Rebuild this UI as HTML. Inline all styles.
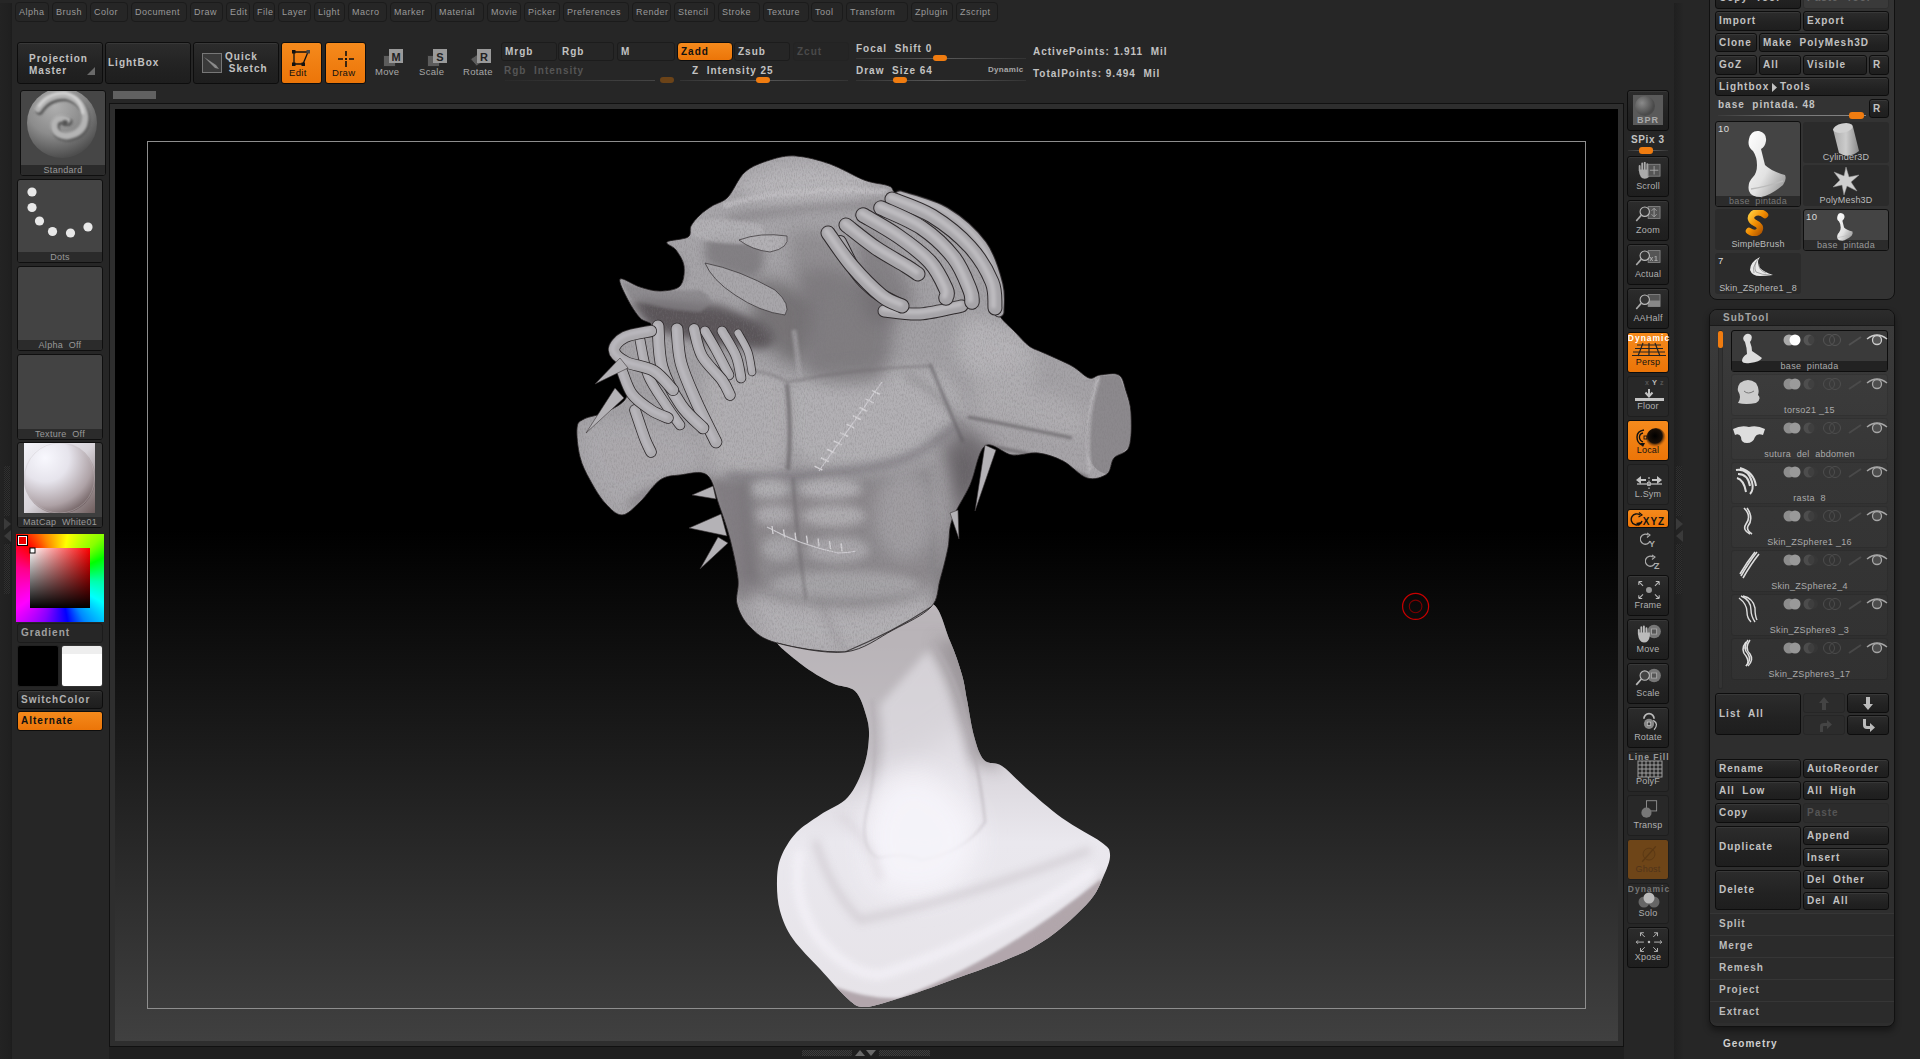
<!DOCTYPE html><html><head><meta charset="utf-8"><style>
*{margin:0;padding:0;box-sizing:border-box}
html,body{width:1920px;height:1059px;overflow:hidden;background:#262626;font-family:"Liberation Sans",sans-serif;}
div,span,svg{position:absolute}
.mb{border:1px solid #1b1b1b;border-radius:4px;color:#9a9a9a;font-size:9px;line-height:19px;padding-left:3px;white-space:nowrap;letter-spacing:0.5px}
.b{border:1px solid #0d0d0d;border-radius:3px;background:linear-gradient(#2c2c2c,#222 60%,#1e1e1e);color:#c2c2c2;font-weight:bold;font-size:10px;letter-spacing:1px;white-space:nowrap;padding-left:3px;box-shadow:inset 0 1px 0 #383838}
.bd{border:1px solid #272727;border-radius:3px;background:#2a2a2a;color:#555;font-weight:bold;font-size:10px;letter-spacing:1px;white-space:nowrap;padding-left:3px}
.o{background:linear-gradient(#f58a1c,#ec7508);border:1px solid #0d0d0d;border-radius:3px;color:#111;font-weight:bold;font-size:10px;letter-spacing:1px;white-space:nowrap;padding-left:3px}
.t{color:#c2c2c2;font-weight:bold;font-size:10px;letter-spacing:1px;white-space:nowrap}
.tr{color:#b4b4b4;font-size:9px;letter-spacing:0.3px;white-space:nowrap}
.tile{border:1px solid #0f0f0f;border-radius:3px;background:#464646;overflow:hidden}
.lab{left:0;right:0;bottom:0;height:10px;background:#2a2a2a;color:#999;font-size:9px;line-height:10px;text-align:center;letter-spacing:0.3px;white-space:nowrap}
</style></head><body>
<div class="" style="left:0px;top:3px;width:12px;height:1056px;background:linear-gradient(90deg,#232323,#202020 80%,#1c1c1c)"></div>
<div class="mb" style="left:15px;top:2px;width:34px;height:20px;">Alpha</div>
<div class="mb" style="left:52px;top:2px;width:35px;height:20px;">Brush</div>
<div class="mb" style="left:90px;top:2px;width:38px;height:20px;">Color</div>
<div class="mb" style="left:131px;top:2px;width:56px;height:20px;">Document</div>
<div class="mb" style="left:190px;top:2px;width:33px;height:20px;">Draw</div>
<div class="mb" style="left:226px;top:2px;width:24px;height:20px;">Edit</div>
<div class="mb" style="left:253px;top:2px;width:22px;height:20px;">File</div>
<div class="mb" style="left:278px;top:2px;width:33px;height:20px;">Layer</div>
<div class="mb" style="left:314px;top:2px;width:31px;height:20px;">Light</div>
<div class="mb" style="left:348px;top:2px;width:39px;height:20px;">Macro</div>
<div class="mb" style="left:390px;top:2px;width:42px;height:20px;">Marker</div>
<div class="mb" style="left:435px;top:2px;width:49px;height:20px;">Material</div>
<div class="mb" style="left:487px;top:2px;width:34px;height:20px;">Movie</div>
<div class="mb" style="left:524px;top:2px;width:36px;height:20px;">Picker</div>
<div class="mb" style="left:563px;top:2px;width:66px;height:20px;">Preferences</div>
<div class="mb" style="left:632px;top:2px;width:39px;height:20px;">Render</div>
<div class="mb" style="left:674px;top:2px;width:41px;height:20px;">Stencil</div>
<div class="mb" style="left:718px;top:2px;width:42px;height:20px;">Stroke</div>
<div class="mb" style="left:763px;top:2px;width:46px;height:20px;">Texture</div>
<div class="mb" style="left:811px;top:2px;width:32px;height:20px;">Tool</div>
<div class="mb" style="left:846px;top:2px;width:62px;height:20px;">Transform</div>
<div class="mb" style="left:911px;top:2px;width:42px;height:20px;">Zplugin</div>
<div class="mb" style="left:956px;top:2px;width:42px;height:20px;">Zscript</div>
<div class="" style="left:109px;top:103px;width:1515px;height:944px;background:#2e2e2e;border:1px solid #111"></div>
<div class="" style="left:115px;top:109px;width:1503px;height:932px;background:linear-gradient(#000 0px,#000 420px,#404040 932px)"></div>
<div class="" style="left:147px;top:141px;width:1439px;height:868px;border:1px solid #8e8e8e"></div>
<div class="" style="left:113px;top:91px;width:43px;height:8px;background:#616161"></div>
<svg style="left:0;top:0" width="1920" height="1059" viewBox="0 0 1920 1059">
<defs>
<clipPath id="cv"><rect x="115" y="109" width="1503" height="932"/></clipPath>
<clipPath id="bodyclip"><path d="M728.0 197.0 C733.5 191.3 738.0 178.2 745.0 172.0 C752.0 165.8 761.5 162.7 770.0 160.0 C778.5 157.3 786.0 155.3 796.0 156.0 C806.0 156.7 818.7 160.0 830.0 164.0 C841.3 168.0 854.2 176.3 864.0 180.0 C873.8 183.7 883.5 183.7 889.0 186.0 C894.5 188.3 891.0 190.8 897.0 194.0 C903.0 197.2 915.7 200.3 925.0 205.0 C934.3 209.7 944.7 216.2 953.0 222.0 C961.3 227.8 968.8 234.0 975.0 240.0 C981.2 246.0 985.3 250.2 990.0 258.0 C994.7 265.8 1000.8 279.2 1003.0 287.0 C1005.2 294.8 1003.5 300.2 1003.0 305.0 C1002.5 309.8 998.0 311.5 1000.0 316.0 C1002.0 320.5 1010.2 327.0 1015.0 332.0 C1019.8 337.0 1024.2 342.5 1029.0 346.0 C1033.8 349.5 1036.8 349.7 1044.0 353.0 C1051.2 356.3 1064.5 361.8 1072.0 366.0 C1079.5 370.2 1084.3 376.5 1089.0 378.0 C1093.7 379.5 1095.0 375.5 1100.0 375.0 C1105.0 374.5 1114.7 372.3 1119.0 375.0 C1123.3 377.7 1124.0 384.7 1126.0 391.0 C1128.0 397.3 1130.5 403.7 1131.0 413.0 C1131.5 422.3 1131.8 439.5 1129.0 447.0 C1126.2 454.5 1117.7 453.5 1114.0 458.0 C1110.3 462.5 1111.5 470.7 1107.0 474.0 C1102.5 477.3 1094.3 480.2 1087.0 478.0 C1079.7 475.8 1071.2 465.2 1063.0 461.0 C1054.8 456.8 1046.5 454.0 1038.0 453.0 C1029.5 452.0 1020.8 456.2 1012.0 455.0 C1003.2 453.8 992.0 441.0 985.0 446.0 C978.0 451.0 975.5 472.7 970.0 485.0 C964.5 497.3 955.7 509.5 952.0 520.0 C948.3 530.5 950.0 538.0 948.0 548.0 C946.0 558.0 942.8 570.2 940.0 580.0 C937.2 589.8 938.8 598.7 931.0 607.0 C923.2 615.3 907.3 622.5 893.0 630.0 C878.7 637.5 864.3 649.8 845.0 652.0 C825.7 654.2 792.8 647.2 777.0 643.0 C761.2 638.8 756.7 633.5 750.0 627.0 C743.3 620.5 739.0 612.0 737.0 604.0 C735.0 596.0 739.2 589.8 738.0 579.0 C736.8 568.2 733.2 551.3 730.0 539.0 C726.8 526.7 722.8 515.7 719.0 505.0 C715.2 494.3 713.5 480.0 707.0 475.0 C700.5 470.0 687.8 474.2 680.0 475.0 C672.2 475.8 666.7 475.5 660.0 480.0 C653.3 484.5 646.3 496.2 640.0 502.0 C633.7 507.8 627.8 514.8 622.0 515.0 C616.2 515.2 610.3 508.8 605.0 503.0 C599.7 497.2 594.2 487.7 590.0 480.0 C585.8 472.3 582.2 465.7 580.0 457.0 C577.8 448.3 576.3 434.3 577.0 428.0 C577.7 421.7 579.2 421.7 584.0 419.0 C588.8 416.3 599.0 415.5 606.0 412.0 C613.0 408.5 623.0 404.0 626.0 398.0 C629.0 392.0 625.8 383.7 624.0 376.0 C622.2 368.3 614.0 358.8 615.0 352.0 C616.0 345.2 624.0 339.5 630.0 335.0 C636.0 330.5 649.3 327.8 651.0 325.0 C652.7 322.2 643.8 322.2 640.0 318.0 C636.2 313.8 631.3 306.5 628.0 300.0 C624.7 293.5 618.0 281.2 620.0 279.0 C622.0 276.8 633.3 285.0 640.0 287.0 C646.7 289.0 653.3 291.2 660.0 291.0 C666.7 290.8 676.0 290.2 680.0 286.0 C684.0 281.8 684.7 272.0 684.0 266.0 C683.3 260.0 678.8 254.0 676.0 250.0 C673.2 246.0 665.0 244.2 667.0 242.0 C669.0 239.8 684.0 239.7 688.0 237.0 C692.0 234.3 689.0 229.7 691.0 226.0 C693.0 222.3 696.5 218.3 700.0 215.0 C703.5 211.7 707.3 209.0 712.0 206.0 C716.7 203.0 722.5 202.7 728.0 197.0Z"/></clipPath>
<clipPath id="baseclip"><path d="M777.0 638.0 C769.7 640.7 791.8 656.5 801.0 664.0 C810.2 671.5 823.0 678.5 832.0 683.0 C841.0 687.5 849.3 685.7 855.0 691.0 C860.7 696.3 863.7 707.5 866.0 715.0 C868.3 722.5 869.3 727.5 869.0 736.0 C868.7 744.5 867.5 755.8 864.0 766.0 C860.5 776.2 855.3 788.8 848.0 797.0 C840.7 805.2 828.7 809.0 820.0 815.0 C811.3 821.0 802.5 826.0 796.0 833.0 C789.5 840.0 784.2 849.0 781.0 857.0 C777.8 865.0 777.2 872.0 777.0 881.0 C776.8 890.0 777.3 901.3 780.0 911.0 C782.7 920.7 786.3 929.3 793.0 939.0 C799.7 948.7 810.8 959.0 820.0 969.0 C829.2 979.0 840.8 992.7 848.0 999.0 C855.2 1005.3 856.5 1006.5 863.0 1007.0 C869.5 1007.5 874.0 1005.8 887.0 1002.0 C900.0 998.2 916.8 993.0 941.0 984.0 C965.2 975.0 1007.8 961.2 1032.0 948.0 C1056.2 934.8 1074.0 917.2 1086.0 905.0 C1098.0 892.8 1100.0 883.5 1104.0 875.0 C1108.0 866.5 1110.5 859.5 1110.0 854.0 C1109.5 848.5 1109.0 848.0 1101.0 842.0 C1093.0 836.0 1074.5 827.0 1062.0 818.0 C1049.5 809.0 1036.0 796.7 1026.0 788.0 C1016.0 779.3 1009.0 770.7 1002.0 766.0 C995.0 761.3 988.7 765.0 984.0 760.0 C979.3 755.0 976.8 746.0 974.0 736.0 C971.2 726.0 969.0 710.2 967.0 700.0 C965.0 689.8 964.8 684.8 962.0 675.0 C959.2 665.2 955.2 653.0 950.0 641.0 C944.8 629.0 940.5 605.7 931.0 603.0 C921.5 600.3 907.3 617.5 893.0 625.0 C878.7 632.5 864.3 645.8 845.0 648.0 C825.7 650.2 784.3 635.3 777.0 638.0Z"/></clipPath>
<filter id="b4" filterUnits="userSpaceOnUse" x="100" y="100" width="1520" height="940"><feGaussianBlur stdDeviation="4"/></filter>
<filter id="b8" filterUnits="userSpaceOnUse" x="100" y="100" width="1520" height="940"><feGaussianBlur stdDeviation="8"/></filter>
<filter id="b14" filterUnits="userSpaceOnUse" x="100" y="100" width="1520" height="940"><feGaussianBlur stdDeviation="14"/></filter>
<filter id="tex" filterUnits="userSpaceOnUse" x="560" y="140" width="600" height="560"><feTurbulence type="fractalNoise" baseFrequency="0.9 0.35" numOctaves="2" seed="3" result="n"/><feColorMatrix in="n" type="matrix" values="0 0 0 0 0.2  0 0 0 0 0.19  0 0 0 0 0.2  0 0 0 -2.2 1.25" result="d"/><feComposite in="d" in2="SourceGraphic" operator="in"/></filter>
<filter id="b2" filterUnits="userSpaceOnUse" x="100" y="100" width="1520" height="940"><feGaussianBlur stdDeviation="1.5"/></filter>
<linearGradient id="bodyg" x1="0" y1="0" x2="0.3" y2="1"><stop offset="0" stop-color="#aaa8ac"/><stop offset="0.5" stop-color="#a2a0a4"/><stop offset="1" stop-color="#aaa7ab"/></linearGradient>
<linearGradient id="baseg" gradientUnits="userSpaceOnUse" x1="0" y1="640" x2="0" y2="1008"><stop offset="0" stop-color="#c6c0c4"/><stop offset="0.3" stop-color="#d6d2d8"/><stop offset="0.55" stop-color="#eae8ee"/><stop offset="1" stop-color="#e6e3e8"/></linearGradient>
</defs>
<g clip-path="url(#cv)">
<path d="M777.0 638.0 C769.7 640.7 791.8 656.5 801.0 664.0 C810.2 671.5 823.0 678.5 832.0 683.0 C841.0 687.5 849.3 685.7 855.0 691.0 C860.7 696.3 863.7 707.5 866.0 715.0 C868.3 722.5 869.3 727.5 869.0 736.0 C868.7 744.5 867.5 755.8 864.0 766.0 C860.5 776.2 855.3 788.8 848.0 797.0 C840.7 805.2 828.7 809.0 820.0 815.0 C811.3 821.0 802.5 826.0 796.0 833.0 C789.5 840.0 784.2 849.0 781.0 857.0 C777.8 865.0 777.2 872.0 777.0 881.0 C776.8 890.0 777.3 901.3 780.0 911.0 C782.7 920.7 786.3 929.3 793.0 939.0 C799.7 948.7 810.8 959.0 820.0 969.0 C829.2 979.0 840.8 992.7 848.0 999.0 C855.2 1005.3 856.5 1006.5 863.0 1007.0 C869.5 1007.5 874.0 1005.8 887.0 1002.0 C900.0 998.2 916.8 993.0 941.0 984.0 C965.2 975.0 1007.8 961.2 1032.0 948.0 C1056.2 934.8 1074.0 917.2 1086.0 905.0 C1098.0 892.8 1100.0 883.5 1104.0 875.0 C1108.0 866.5 1110.5 859.5 1110.0 854.0 C1109.5 848.5 1109.0 848.0 1101.0 842.0 C1093.0 836.0 1074.5 827.0 1062.0 818.0 C1049.5 809.0 1036.0 796.7 1026.0 788.0 C1016.0 779.3 1009.0 770.7 1002.0 766.0 C995.0 761.3 988.7 765.0 984.0 760.0 C979.3 755.0 976.8 746.0 974.0 736.0 C971.2 726.0 969.0 710.2 967.0 700.0 C965.0 689.8 964.8 684.8 962.0 675.0 C959.2 665.2 955.2 653.0 950.0 641.0 C944.8 629.0 940.5 605.7 931.0 603.0 C921.5 600.3 907.3 617.5 893.0 625.0 C878.7 632.5 864.3 645.8 845.0 648.0 C825.7 650.2 784.3 635.3 777.0 638.0Z" fill="url(#baseg)"/>
<g clip-path="url(#baseclip)">
<path d="M760 600 L980 600 L990 700 Q930 760 860 780 L760 760Z" fill="#aca7ac" filter="url(#b14)" opacity="0.5"/>
<path d="M935 640 Q962 700 970 760 L1000 770 L990 640Z" fill="#8e888c" filter="url(#b8)" opacity="0.7"/>
<path d="M872 700 Q880 760 866 815 Q860 848 878 858 Q900 852 922 860 Q965 852 985 822 Q980 770 964 712 Q952 668 932 642" stroke="#b4aeb4" stroke-width="2.2" fill="none" filter="url(#b2)" opacity="0.75"/>
<path d="M880 705 Q888 760 875 812 Q872 840 885 850 Q905 846 925 852 Q958 846 975 820 Q970 770 955 715 Q945 675 928 650Z" fill="#f0eef4" filter="url(#b4)" opacity="0.5"/>
<path d="M865 820 Q875 780 905 770 Q950 770 975 820 Q990 870 940 895 Q890 905 868 880Z" fill="#f6f4fa" filter="url(#b14)" opacity="0.9"/>
<path d="M800 850 Q790 900 820 940 Q850 975 880 975 Q980 945 1095 870" stroke="#f4f2f8" stroke-width="9" fill="none" filter="url(#b4)" opacity="0.9"/>
<path d="M815 840 Q830 890 860 920 Q960 900 1090 850" stroke="#c6c0c6" stroke-width="6" fill="none" filter="url(#b4)" opacity="0.7"/>
<path d="M840 815 Q870 840 880 880" stroke="#d0cad0" stroke-width="5" fill="none" filter="url(#b4)" opacity="0.6"/>
<path d="M830 985 Q870 1000 900 998 Q1000 960 1100 880 L1120 900 L1120 1030 L800 1030Z" fill="#a89ca2" filter="url(#b2)" opacity="0.85"/>
<path d="M1040 940 Q1080 910 1104 875 L1120 880 L1100 940Z" fill="#b0a6aa" filter="url(#b4)" opacity="0.6"/>
</g>
<path d="M728.0 197.0 C733.5 191.3 738.0 178.2 745.0 172.0 C752.0 165.8 761.5 162.7 770.0 160.0 C778.5 157.3 786.0 155.3 796.0 156.0 C806.0 156.7 818.7 160.0 830.0 164.0 C841.3 168.0 854.2 176.3 864.0 180.0 C873.8 183.7 883.5 183.7 889.0 186.0 C894.5 188.3 891.0 190.8 897.0 194.0 C903.0 197.2 915.7 200.3 925.0 205.0 C934.3 209.7 944.7 216.2 953.0 222.0 C961.3 227.8 968.8 234.0 975.0 240.0 C981.2 246.0 985.3 250.2 990.0 258.0 C994.7 265.8 1000.8 279.2 1003.0 287.0 C1005.2 294.8 1003.5 300.2 1003.0 305.0 C1002.5 309.8 998.0 311.5 1000.0 316.0 C1002.0 320.5 1010.2 327.0 1015.0 332.0 C1019.8 337.0 1024.2 342.5 1029.0 346.0 C1033.8 349.5 1036.8 349.7 1044.0 353.0 C1051.2 356.3 1064.5 361.8 1072.0 366.0 C1079.5 370.2 1084.3 376.5 1089.0 378.0 C1093.7 379.5 1095.0 375.5 1100.0 375.0 C1105.0 374.5 1114.7 372.3 1119.0 375.0 C1123.3 377.7 1124.0 384.7 1126.0 391.0 C1128.0 397.3 1130.5 403.7 1131.0 413.0 C1131.5 422.3 1131.8 439.5 1129.0 447.0 C1126.2 454.5 1117.7 453.5 1114.0 458.0 C1110.3 462.5 1111.5 470.7 1107.0 474.0 C1102.5 477.3 1094.3 480.2 1087.0 478.0 C1079.7 475.8 1071.2 465.2 1063.0 461.0 C1054.8 456.8 1046.5 454.0 1038.0 453.0 C1029.5 452.0 1020.8 456.2 1012.0 455.0 C1003.2 453.8 992.0 441.0 985.0 446.0 C978.0 451.0 975.5 472.7 970.0 485.0 C964.5 497.3 955.7 509.5 952.0 520.0 C948.3 530.5 950.0 538.0 948.0 548.0 C946.0 558.0 942.8 570.2 940.0 580.0 C937.2 589.8 938.8 598.7 931.0 607.0 C923.2 615.3 907.3 622.5 893.0 630.0 C878.7 637.5 864.3 649.8 845.0 652.0 C825.7 654.2 792.8 647.2 777.0 643.0 C761.2 638.8 756.7 633.5 750.0 627.0 C743.3 620.5 739.0 612.0 737.0 604.0 C735.0 596.0 739.2 589.8 738.0 579.0 C736.8 568.2 733.2 551.3 730.0 539.0 C726.8 526.7 722.8 515.7 719.0 505.0 C715.2 494.3 713.5 480.0 707.0 475.0 C700.5 470.0 687.8 474.2 680.0 475.0 C672.2 475.8 666.7 475.5 660.0 480.0 C653.3 484.5 646.3 496.2 640.0 502.0 C633.7 507.8 627.8 514.8 622.0 515.0 C616.2 515.2 610.3 508.8 605.0 503.0 C599.7 497.2 594.2 487.7 590.0 480.0 C585.8 472.3 582.2 465.7 580.0 457.0 C577.8 448.3 576.3 434.3 577.0 428.0 C577.7 421.7 579.2 421.7 584.0 419.0 C588.8 416.3 599.0 415.5 606.0 412.0 C613.0 408.5 623.0 404.0 626.0 398.0 C629.0 392.0 625.8 383.7 624.0 376.0 C622.2 368.3 614.0 358.8 615.0 352.0 C616.0 345.2 624.0 339.5 630.0 335.0 C636.0 330.5 649.3 327.8 651.0 325.0 C652.7 322.2 643.8 322.2 640.0 318.0 C636.2 313.8 631.3 306.5 628.0 300.0 C624.7 293.5 618.0 281.2 620.0 279.0 C622.0 276.8 633.3 285.0 640.0 287.0 C646.7 289.0 653.3 291.2 660.0 291.0 C666.7 290.8 676.0 290.2 680.0 286.0 C684.0 281.8 684.7 272.0 684.0 266.0 C683.3 260.0 678.8 254.0 676.0 250.0 C673.2 246.0 665.0 244.2 667.0 242.0 C669.0 239.8 684.0 239.7 688.0 237.0 C692.0 234.3 689.0 229.7 691.0 226.0 C693.0 222.3 696.5 218.3 700.0 215.0 C703.5 211.7 707.3 209.0 712.0 206.0 C716.7 203.0 722.5 202.7 728.0 197.0Z" fill="url(#bodyg)"/>
<g clip-path="url(#bodyclip)">
<path d="M720 470 Q820 470 950 440 L960 620 L740 620Z" fill="#8a878b" filter="url(#b14)" opacity="0.3"/>
<path d="M705 372 Q750 360 787 380 Q792 430 782 468 Q740 478 712 470 Q700 420 705 372Z" fill="#b2b0b4" filter="url(#b8)" opacity="0.9"/>
<path d="M790 380 Q860 360 940 372 Q975 400 955 440 Q900 470 840 468 Q795 466 790 440Z" fill="#b4b2b6" filter="url(#b8)" opacity="0.9"/>
<path d="M787 384 Q792 430 788 470" stroke="#6c686c" stroke-width="4" fill="none" filter="url(#b2)" opacity="0.8"/>
<path d="M726 476 Q800 482 893 463 Q930 450 955 425" stroke="#66626a" stroke-width="5" fill="none" filter="url(#b4)" opacity="0.8"/>
<path d="M740 478 Q820 490 930 470 L945 600 Q840 615 745 600Z" fill="#7c797d" filter="url(#b4)" opacity="0.5"/>
<ellipse cx="770" cy="489" rx="20" ry="10" fill="#b4b2b6" filter="url(#b4)" opacity="0.9"/>
<ellipse cx="830" cy="489" rx="32" ry="10" fill="#b6b4b8" filter="url(#b4)" opacity="0.9"/>
<ellipse cx="774" cy="515" rx="19" ry="10" fill="#b0aeb2" filter="url(#b4)" opacity="0.9"/>
<ellipse cx="834" cy="516" rx="32" ry="11" fill="#b2b0b4" filter="url(#b4)" opacity="0.9"/>
<ellipse cx="780" cy="548" rx="18" ry="13" fill="#acaaae" filter="url(#b4)" opacity="0.85"/>
<ellipse cx="838" cy="550" rx="32" ry="13" fill="#aeacb0" filter="url(#b4)" opacity="0.85"/>
<ellipse cx="905" cy="515" rx="30" ry="45" fill="#a8a6aa" filter="url(#b8)" opacity="0.7"/>
<ellipse cx="845" cy="585" rx="75" ry="14" fill="#acaaae" filter="url(#b4)" opacity="0.8"/>
<path d="M793 478 Q796 530 806 600" stroke="#5e5a5e" stroke-width="2" fill="none" filter="url(#b2)" opacity="0.6"/>
<path d="M708 478 Q725 540 738 600 L762 596 Q752 540 748 482Z" fill="#747074" filter="url(#b4)" opacity="0.7"/>
<path d="M930 430 Q965 470 950 540 Q940 600 925 610 L950 610 Q975 540 975 460Z" fill="#6a666a" filter="url(#b8)" opacity="0.75"/>
<path d="M742 585 Q800 610 860 612 Q910 605 935 580 L935 640 L845 655 L770 645Z" fill="#b6b4b8" filter="url(#b8)" opacity="0.8"/>
<path d="M820 600 Q830 630 845 652" stroke="#7a767a" stroke-width="3" fill="none" filter="url(#b4)" opacity="0.5"/>
<path d="M752 280 Q785 275 810 300 Q815 340 800 365 Q770 360 752 320Z" fill="#5a5658" filter="url(#b8)" opacity="0.6"/>
<path d="M800 270 Q850 260 890 300 Q900 345 880 380 Q840 390 805 375Z" fill="#6a666a" filter="url(#b8)" opacity="0.6"/>
<path d="M794 330 Q798 360 800 380" stroke="#a8a6aa" stroke-width="5" fill="none" filter="url(#b2)" opacity="0.7"/>
<path d="M860 225 Q900 250 915 300 Q895 330 870 320 Q850 280 860 225Z" fill="#6a666a" filter="url(#b8)" opacity="0.55"/>
<path d="M705 240 Q735 230 762 245 Q770 270 750 278 Q720 275 705 260Z" fill="#5a565a" filter="url(#b4)" opacity="0.45"/>
<path d="M705 263 Q740 270 775 290 Q792 305 785 315 Q760 312 735 295 Q712 280 705 263Z" fill="#a8a6aa" stroke="#3a3638" stroke-width="0.8"/>
<path d="M640 300 Q700 310 760 320 Q790 340 760 350 Q700 345 650 325Z" fill="#5e5a5e" filter="url(#b4)" opacity="0.75"/>
<path d="M630 300 Q680 300 720 305 Q760 320 770 345 Q720 345 660 330 Q640 320 630 300Z" fill="#545052" filter="url(#b4)" opacity="0.8"/>
<path d="M622 282 Q660 292 700 290 Q720 300 700 312 Q660 310 630 298Z" fill="#858286" filter="url(#b2)" opacity="0.7"/>
<path d="M667 242 Q680 250 690 270 Q690 285 675 290 L640 287 Q622 282 620 279 Q640 280 660 275 Q672 262 667 242Z" fill="#9a989c" filter="url(#b2)" opacity="0.8"/>
<path d="M735 185 Q790 150 870 175 Q880 200 830 205 Q760 210 735 185Z" fill="#bcbabe" filter="url(#b8)" opacity="0.8"/>
<path d="M723 206 Q790 185 887 192" stroke="#c2c0c4" stroke-width="6" fill="none" filter="url(#b2)" opacity="0.7"/>
<path d="M728 220 Q800 205 885 205" stroke="#6e6a6e" stroke-width="6" fill="none" filter="url(#b4)" opacity="0.55"/>
<path d="M690 222 Q720 215 762 225 Q770 240 745 244 Q710 244 692 236Z" fill="#b6b4b8" filter="url(#b2)" opacity="0.75"/>
<path d="M739 240 Q760 232 787 236 Q790 248 770 252 Q752 250 739 240Z" fill="#b2b0b4" stroke="#2e2a2c" stroke-width="0.7"/>
<path d="M790 232 Q830 225 850 250 Q850 290 830 305 Q800 300 790 270Z" fill="#7e7a7e" filter="url(#b8)" opacity="0.5"/>
<path d="M955 330 Q1000 315 1030 345 Q1050 375 1020 395 Q980 390 955 360Z" fill="#b4b2b6" filter="url(#b8)" opacity="0.8"/>
<path d="M905 375 Q940 390 965 430" stroke="#6e6a6e" stroke-width="4" fill="none" filter="url(#b4)" opacity="0.6"/>
<path d="M975 380 Q1030 380 1085 410 L1085 440 Q1030 430 975 415Z" fill="#b2b0b4" filter="url(#b8)" opacity="0.75"/>
<path d="M968 417 Q1010 425 1072 438" stroke="#5a565a" stroke-width="2.5" fill="none" filter="url(#b2)" opacity="0.8"/>
<path d="M985 446 Q1040 452 1088 478" stroke="#4e4a4e" stroke-width="3" fill="none" filter="url(#b2)" opacity="0.6"/>
<path d="M955 425 Q985 435 995 452 Q980 490 962 505 Q945 470 955 425Z" fill="#5e5a5e" filter="url(#b8)" opacity="0.7"/>
<path d="M960 315 Q1000 312 1030 350 Q1010 380 970 370Z" fill="#b8b6ba" filter="url(#b8)" opacity="0.7"/>
<path d="M1100 376 L1119 375 Q1126 391 1131 413 Q1131 440 1129 447 Q1114 458 1107 474 Q1094 472 1088 455 Q1084 420 1100 376Z" fill="#8c898d"/>
<path d="M1099 377 Q1084 420 1090 472" stroke="#c2c0c4" stroke-width="3" fill="none" filter="url(#b2)" opacity="0.8"/>
<path d="M582 425 Q640 410 700 440 Q710 470 680 478 Q640 490 622 510 Q595 495 582 460Z" fill="#aeacb0" filter="url(#b8)" opacity="0.8"/>
<path d="M630 505 Q660 480 705 478" stroke="#5e5a5e" stroke-width="5" fill="none" filter="url(#b4)" opacity="0.6"/>
<path d="M930 364 Q945 400 963 442" stroke="#58545a" stroke-width="2.5" fill="none" filter="url(#b2)" opacity="0.7"/>
<path d="M712 372 Q760 365 787 382 Q860 368 930 366" stroke="#6a666a" stroke-width="2" fill="none" filter="url(#b2)" opacity="0.6"/>
<path d="M882 382 L819 471" stroke="#cfcdd2" stroke-width="1.2" fill="none"/>
<path d="M767 527 Q800 545 838 553 Q848 553 856 551" stroke="#cfcdd2" stroke-width="1.2" fill="none"/>
<path d="M777 643 Q810 652 845 652 Q893 632 931 607" stroke="#3e3a3c" stroke-width="1.2" fill="none"/>
<path d="M872.0 390.5 L880.0 394.5" stroke="#d4d2d6" stroke-width="1.6"/>
<path d="M865.6 398.9 L873.6 402.9" stroke="#d4d2d6" stroke-width="1.6"/>
<path d="M859.2 407.3 L867.2 411.3" stroke="#d4d2d6" stroke-width="1.6"/>
<path d="M852.8 415.7 L860.8 419.7" stroke="#d4d2d6" stroke-width="1.6"/>
<path d="M846.4 424.1 L854.4 428.1" stroke="#d4d2d6" stroke-width="1.6"/>
<path d="M840.0 432.5 L848.0 436.5" stroke="#d4d2d6" stroke-width="1.6"/>
<path d="M833.6 440.9 L841.6 444.9" stroke="#d4d2d6" stroke-width="1.6"/>
<path d="M827.2 449.3 L835.2 453.3" stroke="#d4d2d6" stroke-width="1.6"/>
<path d="M820.8 457.7 L828.8 461.7" stroke="#d4d2d6" stroke-width="1.6"/>
<path d="M814.4 466.1 L822.4 470.1" stroke="#d4d2d6" stroke-width="1.6"/>
<path d="M772.0 526.0 L773.0 534.0" stroke="#d4d2d6" stroke-width="1.4"/>
<path d="M783.5 529.5 L784.5 537.5" stroke="#d4d2d6" stroke-width="1.4"/>
<path d="M795.0 532.7 L796.0 540.7" stroke="#d4d2d6" stroke-width="1.4"/>
<path d="M806.5 535.7 L807.5 543.7" stroke="#d4d2d6" stroke-width="1.4"/>
<path d="M818.0 538.5 L819.0 546.5" stroke="#d4d2d6" stroke-width="1.4"/>
<path d="M829.5 541.0 L830.5 549.0" stroke="#d4d2d6" stroke-width="1.4"/>
<path d="M841.0 543.3 L842.0 551.3" stroke="#d4d2d6" stroke-width="1.4"/>
<rect x="560" y="140" width="600" height="560" fill="#fff" filter="url(#tex)" opacity="0.35"/>
</g>
<path d="M728.0 197.0 C733.5 191.3 738.0 178.2 745.0 172.0 C752.0 165.8 761.5 162.7 770.0 160.0 C778.5 157.3 786.0 155.3 796.0 156.0 C806.0 156.7 818.7 160.0 830.0 164.0 C841.3 168.0 854.2 176.3 864.0 180.0 C873.8 183.7 883.5 183.7 889.0 186.0 C894.5 188.3 891.0 190.8 897.0 194.0 C903.0 197.2 915.7 200.3 925.0 205.0 C934.3 209.7 944.7 216.2 953.0 222.0 C961.3 227.8 968.8 234.0 975.0 240.0 C981.2 246.0 985.3 250.2 990.0 258.0 C994.7 265.8 1000.8 279.2 1003.0 287.0 C1005.2 294.8 1003.5 300.2 1003.0 305.0 C1002.5 309.8 998.0 311.5 1000.0 316.0 C1002.0 320.5 1010.2 327.0 1015.0 332.0 C1019.8 337.0 1024.2 342.5 1029.0 346.0 C1033.8 349.5 1036.8 349.7 1044.0 353.0 C1051.2 356.3 1064.5 361.8 1072.0 366.0 C1079.5 370.2 1084.3 376.5 1089.0 378.0 C1093.7 379.5 1095.0 375.5 1100.0 375.0 C1105.0 374.5 1114.7 372.3 1119.0 375.0 C1123.3 377.7 1124.0 384.7 1126.0 391.0 C1128.0 397.3 1130.5 403.7 1131.0 413.0 C1131.5 422.3 1131.8 439.5 1129.0 447.0 C1126.2 454.5 1117.7 453.5 1114.0 458.0 C1110.3 462.5 1111.5 470.7 1107.0 474.0 C1102.5 477.3 1094.3 480.2 1087.0 478.0 C1079.7 475.8 1071.2 465.2 1063.0 461.0 C1054.8 456.8 1046.5 454.0 1038.0 453.0 C1029.5 452.0 1020.8 456.2 1012.0 455.0 C1003.2 453.8 992.0 441.0 985.0 446.0 C978.0 451.0 975.5 472.7 970.0 485.0 C964.5 497.3 955.7 509.5 952.0 520.0 C948.3 530.5 950.0 538.0 948.0 548.0 C946.0 558.0 942.8 570.2 940.0 580.0 C937.2 589.8 938.8 598.7 931.0 607.0 C923.2 615.3 907.3 622.5 893.0 630.0 C878.7 637.5 864.3 649.8 845.0 652.0 C825.7 654.2 792.8 647.2 777.0 643.0 C761.2 638.8 756.7 633.5 750.0 627.0 C743.3 620.5 739.0 612.0 737.0 604.0 C735.0 596.0 739.2 589.8 738.0 579.0 C736.8 568.2 733.2 551.3 730.0 539.0 C726.8 526.7 722.8 515.7 719.0 505.0 C715.2 494.3 713.5 480.0 707.0 475.0 C700.5 470.0 687.8 474.2 680.0 475.0 C672.2 475.8 666.7 475.5 660.0 480.0 C653.3 484.5 646.3 496.2 640.0 502.0 C633.7 507.8 627.8 514.8 622.0 515.0 C616.2 515.2 610.3 508.8 605.0 503.0 C599.7 497.2 594.2 487.7 590.0 480.0 C585.8 472.3 582.2 465.7 580.0 457.0 C577.8 448.3 576.3 434.3 577.0 428.0 C577.7 421.7 579.2 421.7 584.0 419.0 C588.8 416.3 599.0 415.5 606.0 412.0 C613.0 408.5 623.0 404.0 626.0 398.0 C629.0 392.0 625.8 383.7 624.0 376.0 C622.2 368.3 614.0 358.8 615.0 352.0 C616.0 345.2 624.0 339.5 630.0 335.0 C636.0 330.5 649.3 327.8 651.0 325.0 C652.7 322.2 643.8 322.2 640.0 318.0 C636.2 313.8 631.3 306.5 628.0 300.0 C624.7 293.5 618.0 281.2 620.0 279.0 C622.0 276.8 633.3 285.0 640.0 287.0 C646.7 289.0 653.3 291.2 660.0 291.0 C666.7 290.8 676.0 290.2 680.0 286.0 C684.0 281.8 684.7 272.0 684.0 266.0 C683.3 260.0 678.8 254.0 676.0 250.0 C673.2 246.0 665.0 244.2 667.0 242.0 C669.0 239.8 684.0 239.7 688.0 237.0 C692.0 234.3 689.0 229.7 691.0 226.0 C693.0 222.3 696.5 218.3 700.0 215.0 C703.5 211.7 707.3 209.0 712.0 206.0 C716.7 203.0 722.5 202.7 728.0 197.0Z" fill="none" stroke="#1e1a1c" stroke-width="1" opacity="0.8"/>
<path d="M900.0 196.0 C907.5 198.7 931.3 203.8 945.0 212.0 C958.7 220.2 973.2 232.8 982.0 245.0 C990.8 257.2 995.2 273.8 998.0 285.0 C1000.8 296.2 998.8 307.5 999.0 312.0" stroke="#2e2a2c" stroke-width="11" fill="none" stroke-linecap="round"/>
<path d="M900.0 196.0 C907.5 198.7 931.3 203.8 945.0 212.0 C958.7 220.2 973.2 232.8 982.0 245.0 C990.8 257.2 995.2 273.8 998.0 285.0 C1000.8 296.2 998.8 307.5 999.0 312.0" stroke="#a6a4a8" stroke-width="9" fill="none" stroke-linecap="round"/>
<path d="M900.0 196.0 C907.5 198.7 931.3 203.8 945.0 212.0 C958.7 220.2 973.2 232.8 982.0 245.0 C990.8 257.2 995.2 273.8 998.0 285.0 C1000.8 296.2 998.8 307.5 999.0 312.0" stroke="#bebcc0" stroke-width="3.6" fill="none" stroke-linecap="round" transform="translate(-1.5,-2)" filter="url(#b2)"/>
<path d="M884.0 311.0 C890.0 311.5 907.0 314.8 920.0 314.0 C933.0 313.2 955.0 307.3 962.0 306.0" stroke="#2e2a2c" stroke-width="13" fill="none" stroke-linecap="round"/>
<path d="M884.0 311.0 C890.0 311.5 907.0 314.8 920.0 314.0 C933.0 313.2 955.0 307.3 962.0 306.0" stroke="#a6a4a8" stroke-width="11" fill="none" stroke-linecap="round"/>
<path d="M884.0 311.0 C890.0 311.5 907.0 314.8 920.0 314.0 C933.0 313.2 955.0 307.3 962.0 306.0" stroke="#bebcc0" stroke-width="4.4" fill="none" stroke-linecap="round" transform="translate(-1.5,-2)" filter="url(#b2)"/>
<path d="M840.0 242.0 C842.7 247.0 850.0 263.7 856.0 272.0 C862.0 280.3 868.3 286.3 876.0 292.0 C883.7 297.7 897.7 303.7 902.0 306.0" stroke="#2e2a2c" stroke-width="14" fill="none" stroke-linecap="round"/>
<path d="M840.0 242.0 C842.7 247.0 850.0 263.7 856.0 272.0 C862.0 280.3 868.3 286.3 876.0 292.0 C883.7 297.7 897.7 303.7 902.0 306.0" stroke="#a6a4a8" stroke-width="12" fill="none" stroke-linecap="round"/>
<path d="M840.0 242.0 C842.7 247.0 850.0 263.7 856.0 272.0 C862.0 280.3 868.3 286.3 876.0 292.0 C883.7 297.7 897.7 303.7 902.0 306.0" stroke="#bebcc0" stroke-width="4.800000000000001" fill="none" stroke-linecap="round" transform="translate(-1.5,-2)" filter="url(#b2)"/>
<path d="M892.0 199.0 C898.7 201.8 919.0 208.0 932.0 216.0 C945.0 224.0 960.0 236.0 970.0 247.0 C980.0 258.0 987.8 271.8 992.0 282.0 C996.2 292.2 994.5 303.7 995.0 308.0" stroke="#2e2a2c" stroke-width="15" fill="none" stroke-linecap="round"/>
<path d="M892.0 199.0 C898.7 201.8 919.0 208.0 932.0 216.0 C945.0 224.0 960.0 236.0 970.0 247.0 C980.0 258.0 987.8 271.8 992.0 282.0 C996.2 292.2 994.5 303.7 995.0 308.0" stroke="#a6a4a8" stroke-width="13" fill="none" stroke-linecap="round"/>
<path d="M892.0 199.0 C898.7 201.8 919.0 208.0 932.0 216.0 C945.0 224.0 960.0 236.0 970.0 247.0 C980.0 258.0 987.8 271.8 992.0 282.0 C996.2 292.2 994.5 303.7 995.0 308.0" stroke="#bebcc0" stroke-width="5.2" fill="none" stroke-linecap="round" transform="translate(-1.5,-2)" filter="url(#b2)"/>
<path d="M881.0 208.0 C887.8 211.3 909.8 219.7 922.0 228.0 C934.2 236.3 946.0 247.7 954.0 258.0 C962.0 268.3 967.0 282.7 970.0 290.0 C973.0 297.3 971.7 300.0 972.0 302.0" stroke="#2e2a2c" stroke-width="15.5" fill="none" stroke-linecap="round"/>
<path d="M881.0 208.0 C887.8 211.3 909.8 219.7 922.0 228.0 C934.2 236.3 946.0 247.7 954.0 258.0 C962.0 268.3 967.0 282.7 970.0 290.0 C973.0 297.3 971.7 300.0 972.0 302.0" stroke="#a6a4a8" stroke-width="13.5" fill="none" stroke-linecap="round"/>
<path d="M881.0 208.0 C887.8 211.3 909.8 219.7 922.0 228.0 C934.2 236.3 946.0 247.7 954.0 258.0 C962.0 268.3 967.0 282.7 970.0 290.0 C973.0 297.3 971.7 300.0 972.0 302.0" stroke="#bebcc0" stroke-width="5.4" fill="none" stroke-linecap="round" transform="translate(-1.5,-2)" filter="url(#b2)"/>
<path d="M863.0 215.0 C868.8 218.5 886.8 228.2 898.0 236.0 C909.2 243.8 922.0 253.2 930.0 262.0 C938.0 270.8 943.3 283.0 946.0 289.0 C948.7 295.0 946.0 296.5 946.0 298.0" stroke="#2e2a2c" stroke-width="15.5" fill="none" stroke-linecap="round"/>
<path d="M863.0 215.0 C868.8 218.5 886.8 228.2 898.0 236.0 C909.2 243.8 922.0 253.2 930.0 262.0 C938.0 270.8 943.3 283.0 946.0 289.0 C948.7 295.0 946.0 296.5 946.0 298.0" stroke="#a6a4a8" stroke-width="13.5" fill="none" stroke-linecap="round"/>
<path d="M863.0 215.0 C868.8 218.5 886.8 228.2 898.0 236.0 C909.2 243.8 922.0 253.2 930.0 262.0 C938.0 270.8 943.3 283.0 946.0 289.0 C948.7 295.0 946.0 296.5 946.0 298.0" stroke="#bebcc0" stroke-width="5.4" fill="none" stroke-linecap="round" transform="translate(-1.5,-2)" filter="url(#b2)"/>
<path d="M828.0 233.0 C832.0 238.5 843.0 255.5 852.0 266.0 C861.0 276.5 873.7 289.3 882.0 296.0 C890.3 302.7 898.7 304.3 902.0 306.0" stroke="#2e2a2c" stroke-width="15" fill="none" stroke-linecap="round"/>
<path d="M828.0 233.0 C832.0 238.5 843.0 255.5 852.0 266.0 C861.0 276.5 873.7 289.3 882.0 296.0 C890.3 302.7 898.7 304.3 902.0 306.0" stroke="#a6a4a8" stroke-width="13" fill="none" stroke-linecap="round"/>
<path d="M828.0 233.0 C832.0 238.5 843.0 255.5 852.0 266.0 C861.0 276.5 873.7 289.3 882.0 296.0 C890.3 302.7 898.7 304.3 902.0 306.0" stroke="#bebcc0" stroke-width="5.2" fill="none" stroke-linecap="round" transform="translate(-1.5,-2)" filter="url(#b2)"/>
<path d="M846.0 225.0 C851.0 228.8 866.0 241.2 876.0 248.0 C886.0 254.8 899.0 261.7 906.0 266.0 C913.0 270.3 916.0 272.7 918.0 274.0" stroke="#2e2a2c" stroke-width="15" fill="none" stroke-linecap="round"/>
<path d="M846.0 225.0 C851.0 228.8 866.0 241.2 876.0 248.0 C886.0 254.8 899.0 261.7 906.0 266.0 C913.0 270.3 916.0 272.7 918.0 274.0" stroke="#a6a4a8" stroke-width="13" fill="none" stroke-linecap="round"/>
<path d="M846.0 225.0 C851.0 228.8 866.0 241.2 876.0 248.0 C886.0 254.8 899.0 261.7 906.0 266.0 C913.0 270.3 916.0 272.7 918.0 274.0" stroke="#bebcc0" stroke-width="5.2" fill="none" stroke-linecap="round" transform="translate(-1.5,-2)" filter="url(#b2)"/>
<path d="M635.0 410.0 C636.7 414.8 642.3 432.0 645.0 439.0 C647.7 446.0 650.0 449.8 651.0 452.0" stroke="#2e2a2c" stroke-width="11.6" fill="none" stroke-linecap="round"/>
<path d="M635.0 410.0 C636.7 414.8 642.3 432.0 645.0 439.0 C647.7 446.0 650.0 449.8 651.0 452.0" stroke="#acaaae" stroke-width="10" fill="none" stroke-linecap="round"/>
<path d="M635.0 410.0 C636.7 414.8 642.3 432.0 645.0 439.0 C647.7 446.0 650.0 449.8 651.0 452.0" stroke="#bcbac0" stroke-width="3.5" fill="none" stroke-linecap="round" transform="translate(-1.5,-1)" filter="url(#b2)"/>
<path d="M738.0 333.0 C739.7 336.2 745.7 345.5 748.0 352.0 C750.3 358.5 751.3 368.7 752.0 372.0" stroke="#2e2a2c" stroke-width="8.6" fill="none" stroke-linecap="round"/>
<path d="M738.0 333.0 C739.7 336.2 745.7 345.5 748.0 352.0 C750.3 358.5 751.3 368.7 752.0 372.0" stroke="#acaaae" stroke-width="7" fill="none" stroke-linecap="round"/>
<path d="M738.0 333.0 C739.7 336.2 745.7 345.5 748.0 352.0 C750.3 358.5 751.3 368.7 752.0 372.0" stroke="#bcbac0" stroke-width="2.4499999999999997" fill="none" stroke-linecap="round" transform="translate(-1.5,-1)" filter="url(#b2)"/>
<path d="M722.0 331.0 C724.3 335.2 732.8 348.2 736.0 356.0 C739.2 363.8 740.2 374.3 741.0 378.0" stroke="#2e2a2c" stroke-width="10.6" fill="none" stroke-linecap="round"/>
<path d="M722.0 331.0 C724.3 335.2 732.8 348.2 736.0 356.0 C739.2 363.8 740.2 374.3 741.0 378.0" stroke="#acaaae" stroke-width="9" fill="none" stroke-linecap="round"/>
<path d="M722.0 331.0 C724.3 335.2 732.8 348.2 736.0 356.0 C739.2 363.8 740.2 374.3 741.0 378.0" stroke="#bcbac0" stroke-width="3.15" fill="none" stroke-linecap="round" transform="translate(-1.5,-1)" filter="url(#b2)"/>
<path d="M705.0 331.0 C706.8 334.2 712.0 342.7 716.0 350.0 C720.0 357.3 726.8 370.8 729.0 375.0" stroke="#2e2a2c" stroke-width="10.6" fill="none" stroke-linecap="round"/>
<path d="M705.0 331.0 C706.8 334.2 712.0 342.7 716.0 350.0 C720.0 357.3 726.8 370.8 729.0 375.0" stroke="#acaaae" stroke-width="9" fill="none" stroke-linecap="round"/>
<path d="M705.0 331.0 C706.8 334.2 712.0 342.7 716.0 350.0 C720.0 357.3 726.8 370.8 729.0 375.0" stroke="#bcbac0" stroke-width="3.15" fill="none" stroke-linecap="round" transform="translate(-1.5,-1)" filter="url(#b2)"/>
<path d="M694.0 329.0 C695.3 333.5 697.3 347.5 702.0 356.0 C706.7 364.5 717.3 373.5 722.0 380.0 C726.7 386.5 728.7 392.5 730.0 395.0" stroke="#2e2a2c" stroke-width="11.6" fill="none" stroke-linecap="round"/>
<path d="M694.0 329.0 C695.3 333.5 697.3 347.5 702.0 356.0 C706.7 364.5 717.3 373.5 722.0 380.0 C726.7 386.5 728.7 392.5 730.0 395.0" stroke="#acaaae" stroke-width="10" fill="none" stroke-linecap="round"/>
<path d="M694.0 329.0 C695.3 333.5 697.3 347.5 702.0 356.0 C706.7 364.5 717.3 373.5 722.0 380.0 C726.7 386.5 728.7 392.5 730.0 395.0" stroke="#bcbac0" stroke-width="3.5" fill="none" stroke-linecap="round" transform="translate(-1.5,-1)" filter="url(#b2)"/>
<path d="M677.0 329.0 C677.7 334.7 677.8 351.0 681.0 363.0 C684.2 375.0 690.2 387.8 696.0 401.0 C701.8 414.2 712.7 435.2 716.0 442.0" stroke="#2e2a2c" stroke-width="12.6" fill="none" stroke-linecap="round"/>
<path d="M677.0 329.0 C677.7 334.7 677.8 351.0 681.0 363.0 C684.2 375.0 690.2 387.8 696.0 401.0 C701.8 414.2 712.7 435.2 716.0 442.0" stroke="#acaaae" stroke-width="11" fill="none" stroke-linecap="round"/>
<path d="M677.0 329.0 C677.7 334.7 677.8 351.0 681.0 363.0 C684.2 375.0 690.2 387.8 696.0 401.0 C701.8 414.2 712.7 435.2 716.0 442.0" stroke="#bcbac0" stroke-width="3.8499999999999996" fill="none" stroke-linecap="round" transform="translate(-1.5,-1)" filter="url(#b2)"/>
<path d="M658.0 326.0 C658.7 332.8 658.2 353.8 662.0 367.0 C665.8 380.2 674.2 394.8 681.0 405.0 C687.8 415.2 699.3 424.2 703.0 428.0" stroke="#2e2a2c" stroke-width="12.6" fill="none" stroke-linecap="round"/>
<path d="M658.0 326.0 C658.7 332.8 658.2 353.8 662.0 367.0 C665.8 380.2 674.2 394.8 681.0 405.0 C687.8 415.2 699.3 424.2 703.0 428.0" stroke="#acaaae" stroke-width="11" fill="none" stroke-linecap="round"/>
<path d="M658.0 326.0 C658.7 332.8 658.2 353.8 662.0 367.0 C665.8 380.2 674.2 394.8 681.0 405.0 C687.8 415.2 699.3 424.2 703.0 428.0" stroke="#bcbac0" stroke-width="3.8499999999999996" fill="none" stroke-linecap="round" transform="translate(-1.5,-1)" filter="url(#b2)"/>
<path d="M640.0 340.0 C641.3 345.8 643.7 364.2 648.0 375.0 C652.3 385.8 660.7 396.7 666.0 405.0 C671.3 413.3 677.7 421.7 680.0 425.0" stroke="#2e2a2c" stroke-width="10.6" fill="none" stroke-linecap="round"/>
<path d="M640.0 340.0 C641.3 345.8 643.7 364.2 648.0 375.0 C652.3 385.8 660.7 396.7 666.0 405.0 C671.3 413.3 677.7 421.7 680.0 425.0" stroke="#acaaae" stroke-width="9" fill="none" stroke-linecap="round"/>
<path d="M640.0 340.0 C641.3 345.8 643.7 364.2 648.0 375.0 C652.3 385.8 660.7 396.7 666.0 405.0 C671.3 413.3 677.7 421.7 680.0 425.0" stroke="#bcbac0" stroke-width="3.15" fill="none" stroke-linecap="round" transform="translate(-1.5,-1)" filter="url(#b2)"/>
<path d="M622.0 371.0 C623.7 374.8 627.2 387.5 632.0 394.0 C636.8 400.5 645.0 406.0 651.0 410.0 C657.0 414.0 665.2 416.7 668.0 418.0" stroke="#2e2a2c" stroke-width="11.6" fill="none" stroke-linecap="round"/>
<path d="M622.0 371.0 C623.7 374.8 627.2 387.5 632.0 394.0 C636.8 400.5 645.0 406.0 651.0 410.0 C657.0 414.0 665.2 416.7 668.0 418.0" stroke="#acaaae" stroke-width="10" fill="none" stroke-linecap="round"/>
<path d="M622.0 371.0 C623.7 374.8 627.2 387.5 632.0 394.0 C636.8 400.5 645.0 406.0 651.0 410.0 C657.0 414.0 665.2 416.7 668.0 418.0" stroke="#bcbac0" stroke-width="3.5" fill="none" stroke-linecap="round" transform="translate(-1.5,-1)" filter="url(#b2)"/>
<path d="M651.0 331.0 C646.7 332.0 631.2 333.8 625.0 337.0 C618.8 340.2 613.8 345.8 614.0 350.0 C614.2 354.2 619.3 358.5 626.0 362.0 C632.7 365.5 646.2 366.3 654.0 371.0 C661.8 375.7 669.8 386.8 673.0 390.0" stroke="#2e2a2c" stroke-width="12.1" fill="none" stroke-linecap="round"/>
<path d="M651.0 331.0 C646.7 332.0 631.2 333.8 625.0 337.0 C618.8 340.2 613.8 345.8 614.0 350.0 C614.2 354.2 619.3 358.5 626.0 362.0 C632.7 365.5 646.2 366.3 654.0 371.0 C661.8 375.7 669.8 386.8 673.0 390.0" stroke="#acaaae" stroke-width="10.5" fill="none" stroke-linecap="round"/>
<path d="M651.0 331.0 C646.7 332.0 631.2 333.8 625.0 337.0 C618.8 340.2 613.8 345.8 614.0 350.0 C614.2 354.2 619.3 358.5 626.0 362.0 C632.7 365.5 646.2 366.3 654.0 371.0 C661.8 375.7 669.8 386.8 673.0 390.0" stroke="#bcbac0" stroke-width="3.675" fill="none" stroke-linecap="round" transform="translate(-1.5,-1)" filter="url(#b2)"/>
<polygon points="595,384 620,358 628,368" fill="#b4b2b6" stroke="#3a3638" stroke-width="0.6"/>
<polygon points="586,433 615,388 624,398" fill="#b4b2b6" stroke="#3a3638" stroke-width="0.6"/>
<polygon points="692,495 713,486 716,499" fill="#b4b2b6" stroke="#3a3638" stroke-width="0.6"/>
<polygon points="689,528 721,514 727,536" fill="#b4b2b6" stroke="#3a3638" stroke-width="0.6"/>
<polygon points="700,569 718,537 728,543" fill="#b4b2b6" stroke="#3a3638" stroke-width="0.6"/>
<polygon points="975,511 985,445 996,450" fill="#b4b2b6" stroke="#3a3638" stroke-width="0.6"/>
<polygon points="959,539 950,513 958,510" fill="#b4b2b6" stroke="#3a3638" stroke-width="0.6"/>
</g></svg>
<svg style="left:1395px;top:586px" width="40" height="40"><circle cx="20.6" cy="20.4" r="13" fill="none" stroke="#c80000" stroke-width="1.2"/><circle cx="20.6" cy="20.4" r="6.3" fill="none" stroke="#7a0000" stroke-width="1.1"/></svg>
<div class="" style="left:109px;top:1047px;width:1515px;height:12px;background:#1f1f1f"></div>
<div style="left:802px;top:1050px;width:50px;height:6px;background:repeating-conic-gradient(#3c3c3c 0 25%,#242424 0 50%) 0 0/2px 2px"></div>
<svg style="left:854px;top:1049px" width="24" height="8"><path d="M1 7L6 1L11 7Z" fill="#6a6a6a"/><path d="M12 1L22 1L17 7Z" fill="#6a6a6a"/></svg>
<div style="left:879px;top:1050px;width:51px;height:6px;background:repeating-conic-gradient(#3c3c3c 0 25%,#242424 0 50%) 0 0/2px 2px"></div>
<div class="b" style="left:17px;top:42px;width:86px;height:42px;"><span style="left:11px;top:10px;line-height:12px">Projection<br>Master</span><svg style="left:69px;top:24px" width="8" height="8"><path d="M8 0 L8 8 L0 8Z" fill="#6a6a6a"/></svg></div>
<div class="b" style="left:105px;top:42px;width:86px;height:42px;"><span style="left:2px;top:14px;line-height:12px">LightBox</span></div>
<div class="b" style="left:193px;top:42px;width:86px;height:42px;"><svg style="left:8px;top:10px" width="20" height="20"><rect x="0.5" y="0.5" width="19" height="19" fill="#3a3a3a" stroke="#777"/><path d="M2 4 L14 12 L17 16 L13 15 Z" fill="#8a8a8a"/></svg><span style="left:31px;top:8px;line-height:12px">Quick<br>&nbsp;Sketch</span></div>
<div class="o" style="left:281px;top:42px;width:41px;height:42px;padding:0"><svg style="left:8px;top:6px" width="24" height="18"><path d="M4 3 L18 3 L13 15 L4 15 Z" fill="none" stroke="#111" stroke-width="1.3"/><rect x="2" y="1" width="3.5" height="3.5" fill="#111"/><rect x="16.5" y="1" width="3.5" height="3.5" fill="#444"/><rect x="2" y="13.5" width="3.5" height="3.5" fill="#111"/><rect x="11.5" y="13.5" width="3.5" height="3.5" fill="#111"/></svg><span style="left:7px;top:24px;font-weight:normal;font-size:9.5px;letter-spacing:0.3px">Edit</span></div>
<div class="o" style="left:325px;top:42px;width:41px;height:42px;padding:0"><svg style="left:10px;top:8px" width="20" height="16"><path d="M10 0V5M10 10V16M2 8H7M13 8H18" stroke="#111" stroke-width="1.6"/><rect x="9" y="7" width="2" height="2" fill="#111"/></svg><span style="left:6px;top:24px;font-weight:normal;font-size:9.5px;letter-spacing:0.3px">Draw</span></div>
<svg style="left:382px;top:48px" width="24" height="22"><rect x="1.5" y="7.5" width="12" height="11" fill="#5c5c5c" stroke="#2a2a2a"/><rect x="7" y="1" width="14" height="14" fill="#9a9a9a"/><text x="14" y="12.5" font-family="Liberation Sans" font-weight="bold" font-size="11" fill="#222" text-anchor="middle">M</text></svg>
<div class="tr" style="left:375px;top:66px;color:#a8a8a8;font-size:9.5px">Move</div>
<svg style="left:426px;top:48px" width="24" height="22"><rect x="1.5" y="7.5" width="12" height="11" fill="#5c5c5c" stroke="#2a2a2a"/><rect x="7" y="1" width="14" height="14" fill="#9a9a9a"/><text x="14" y="12.5" font-family="Liberation Sans" font-weight="bold" font-size="11" fill="#222" text-anchor="middle">S</text></svg>
<div class="tr" style="left:419px;top:66px;color:#a8a8a8;font-size:9.5px">Scale</div>
<svg style="left:470px;top:48px" width="24" height="22"><path d="M0.5 11 L8 6 L14 13 L6.5 18Z" fill="#5c5c5c" stroke="#2a2a2a"/><rect x="7" y="1" width="14" height="14" fill="#9a9a9a"/><text x="14" y="12.5" font-family="Liberation Sans" font-weight="bold" font-size="11" fill="#222" text-anchor="middle">R</text></svg>
<div class="tr" style="left:463px;top:66px;color:#a8a8a8;font-size:9.5px">Rotate</div>
<div class="b" style="left:501px;top:42px;width:56px;height:19px;border-color:#1c1c1c;background:#262626;box-shadow:none;line-height:17px">Mrgb</div>
<div class="b" style="left:558px;top:42px;width:56px;height:19px;border-color:#1c1c1c;background:#262626;box-shadow:none;line-height:17px">Rgb</div>
<div class="b" style="left:617px;top:42px;width:58px;height:19px;border-color:#1c1c1c;background:#262626;box-shadow:none;line-height:17px">M</div>
<div class="o" style="left:677px;top:42px;width:56px;height:19px;line-height:17px;border-radius:4px">Zadd</div>
<div class="b" style="left:734px;top:42px;width:56px;height:19px;border-color:#1c1c1c;background:#262626;box-shadow:none;line-height:17px">Zsub</div>
<div class="bd" style="left:793px;top:42px;width:56px;height:19px;border-color:#232323;background:#252525;line-height:17px;color:#4a4a4a">Zcut</div>
<div class="t" style="left:504px;top:65px;color:#555">Rgb&nbsp; Intensity</div>
<div style="left:505px;top:80px;width:150px;height:1px;background:linear-gradient(90deg,#2a2a2a,#444)"></div>
<div style="left:660px;top:77px;width:14px;height:6px;border-radius:3px;background:#6b4318"></div>
<div class="t" style="left:692px;top:65px">Z&nbsp; Intensity 25</div>
<div style="left:680px;top:80px;width:168px;height:1px;background:linear-gradient(90deg,#333,#555 50%,#333)"></div>
<div style="left:756px;top:77px;width:14px;height:6px;border-radius:3px;background:#f07c10"></div>
<div class="t" style="left:856px;top:43px">Focal&nbsp; Shift 0</div>
<div style="left:856px;top:58px;width:170px;height:1px;background:linear-gradient(90deg,#333,#5a5a5a 50%,#333)"></div>
<div style="left:933px;top:55px;width:14px;height:6px;border-radius:3px;background:#f07c10"></div>
<div class="t" style="left:856px;top:65px">Draw&nbsp; Size 64</div>
<div class="t" style="left:988px;top:65px;font-size:8px;letter-spacing:0.3px;color:#a8a8a8">Dynamic</div>
<div style="left:856px;top:80px;width:170px;height:1px;background:linear-gradient(90deg,#333,#5a5a5a 50%,#333)"></div>
<div style="left:893px;top:77px;width:14px;height:6px;border-radius:3px;background:#f07c10"></div>
<div class="t" style="left:1033px;top:46px">ActivePoints: 1.911&nbsp; Mil</div>
<div class="t" style="left:1033px;top:68px">TotalPoints: 9.494&nbsp; Mil</div>
<div class="tile" style="left:20px;top:90px;width:86px;height:86px;background:#464646"><svg style="left:0px;top:0px" width="84" height="74" viewBox="0 0 84 74"><defs><radialGradient id="sg1" cx="0.4" cy="0.25" r="0.75"><stop offset="0" stop-color="#b0b0b0"/><stop offset="0.55" stop-color="#8c8c8c"/><stop offset="1" stop-color="#4e4e4e"/></radialGradient><filter id="bl1" x="-20%" y="-20%" width="140%" height="140%"><feGaussianBlur stdDeviation="1.3"/></filter><clipPath id="sph"><circle cx="41" cy="32" r="35"/></clipPath></defs><circle cx="41" cy="32" r="35" fill="url(#sg1)"/><g clip-path="url(#sph)" fill="none" stroke-linecap="round"><path d="M17 18 Q26 4 44 4 Q62 8 64 26 Q64 42 46 45 Q32 44 33 33 Q36 24 46 29" stroke="#5a5a5a" stroke-width="8" filter="url(#bl1)" transform="translate(1.5,2)"/><path d="M17 18 Q26 4 44 4 Q62 8 64 26 Q64 42 46 45 Q32 44 33 33 Q36 24 46 29" stroke="#b4b4b4" stroke-width="7" filter="url(#bl1)"/><path d="M18 15 Q27 2 44 2 Q60 6 62 22" stroke="#d6d6d6" stroke-width="2.5" filter="url(#bl1)"/><circle cx="44" cy="32" r="3" fill="#555" filter="url(#bl1)"/></g></svg><div class="lab" style="height:10px;line-height:10px;background:#2b2b2b">Standard</div></div>
<div class="tile" style="left:17px;top:179px;width:86px;height:84px;background:#444"><svg style="left:0;top:0" width="84" height="72"><circle cx="14" cy="12" r="4.6" fill="#e8e8e8"/><circle cx="14" cy="27.5" r="4.6" fill="#e8e8e8"/><circle cx="21.5" cy="41" r="4.6" fill="#e8e8e8"/><circle cx="34.5" cy="51.5" r="4.6" fill="#e8e8e8"/><circle cx="52.5" cy="53" r="4.6" fill="#e8e8e8"/><circle cx="70" cy="47" r="4.6" fill="#e8e8e8"/></svg><div class="lab" style="height:10px;line-height:10px;background:#2b2b2b">Dots</div></div>
<div class="tile" style="left:17px;top:266px;width:86px;height:85px;background:#434343"><div class="lab" style="height:10px;line-height:10px;background:#2b2b2b">Alpha&nbsp; Off</div></div>
<div class="tile" style="left:17px;top:354px;width:86px;height:86px;background:#434343"><div class="lab" style="height:10px;line-height:10px;background:#2b2b2b">Texture&nbsp; Off</div></div>
<div class="tile" style="left:17px;top:442px;width:86px;height:86px;background:#3e3e3e"><svg style="left:6px;top:0px" width="71" height="70"><defs><radialGradient id="mg" cx="0.3" cy="0.22" r="0.95"><stop offset="0" stop-color="#f8f8fe"/><stop offset="0.35" stop-color="#e6e4ec"/><stop offset="0.7" stop-color="#aea2a6"/><stop offset="1" stop-color="#4e3c3c"/></radialGradient><linearGradient id="mbg" x1="0" y1="0" x2="1" y2="1"><stop offset="0" stop-color="#f4f4fa"/><stop offset="0.5" stop-color="#d8d4da"/><stop offset="1" stop-color="#6e5c5c"/></linearGradient></defs><rect width="71" height="70" fill="url(#mbg)"/><circle cx="35.5" cy="35" r="36" fill="url(#mg)"/><circle cx="35.5" cy="35" r="35" fill="none" stroke="#c8c0c4" stroke-width="0.6" opacity="0.6"/></svg><div class="lab" style="height:10px;line-height:10px;background:#2b2b2b">MatCap&nbsp; White01</div></div>
<div style="left:16px;top:534px;width:88px;height:88px;background:conic-gradient(from -45deg at 50% 50%,#f00 0deg,#f80 25deg,#ff0 55deg,#8f0 90deg,#0f0 110deg,#0fa 140deg,#0ff 165deg,#08f 195deg,#00f 215deg,#80f 245deg,#f0f 280deg,#f08 330deg,#f00 360deg)"></div>
<svg style="left:16px;top:534px" width="88" height="88"><defs><linearGradient id="sqW" x1="0" y1="0" x2="1" y2="0"><stop offset="0" stop-color="#fff"/><stop offset="1" stop-color="#f00"/></linearGradient><linearGradient id="sqK" x1="0" y1="0" x2="0" y2="1"><stop offset="0" stop-color="#000" stop-opacity="0"/><stop offset="1" stop-color="#000"/></linearGradient></defs><rect x="14" y="14" width="60" height="60" fill="url(#sqW)"/><rect x="14" y="14" width="60" height="60" fill="url(#sqK)"/><rect x="2.5" y="2.5" width="8" height="8" fill="#e00" stroke="#fff" stroke-width="1"/><rect x="1.5" y="1.5" width="10" height="10" fill="none" stroke="#000" stroke-width="1"/><rect x="14" y="14" width="5" height="5" fill="#fff" stroke="#000" stroke-width="1"/></svg>
<div class="b" style="left:17px;top:623px;width:86px;height:20px;background:#262626;border-color:#1b1b1b;box-shadow:none;color:#a0a0a0;line-height:18px">Gradient</div>
<div class="" style="left:17px;top:645px;width:42px;height:42px;background:#000;border:1px solid #222;border-radius:3px"></div>
<div class="" style="left:61px;top:645px;width:42px;height:42px;background:linear-gradient(#eee 0,#eee 8px,#fff 8px);border:1px solid #333;border-radius:3px"></div>
<div class="b" style="left:17px;top:690px;width:86px;height:19px;line-height:17px;color:#b0b0b0">SwitchColor</div>
<div class="o" style="left:17px;top:711px;width:86px;height:20px;line-height:18px">Alternate</div>
<div style="left:4px;top:466px;width:6px;height:50px;background:repeating-conic-gradient(#303030 0 25%,#1e1e1e 0 50%) 0 0/2px 2px"></div>
<svg style="left:3px;top:518px" width="9" height="24"><path d="M1 0 L8 6 L1 12Z" fill="#3a3a3a"/><path d="M8 12 L1 18 L8 24Z" fill="#3a3a3a"/></svg>
<div style="left:4px;top:544px;width:6px;height:50px;background:repeating-conic-gradient(#303030 0 25%,#1e1e1e 0 50%) 0 0/2px 2px"></div>
<div class="b" style="left:1627px;top:90px;width:42px;height:41px;padding:0;"><div style="left:0;top:0;width:42px;height:41px;transform:scale(1);transform-origin:50% 8%"><svg style="left:5px;top:4px" width="30" height="30"><defs><radialGradient id="bprg" cx="0.35" cy="0.35" r="0.6"><stop offset="0" stop-color="#8a8a8a"/><stop offset="1" stop-color="#4a4a4a"/></radialGradient></defs><rect width="30" height="30" fill="#5a5a5a"/><circle cx="12" cy="11" r="10" fill="url(#bprg)"/><text x="15" y="28" font-family="Liberation Sans" font-weight="bold" font-size="9" fill="#aaa" text-anchor="middle">BPR</text></svg></div></div>
<div class="t" style="left:1631px;top:134px;font-size:10px;letter-spacing:0.6px">SPix 3</div>
<div style="left:1628px;top:150px;width:40px;height:1px;background:linear-gradient(90deg,#333,#666,#333)"></div>
<div style="left:1639px;top:147px;width:14px;height:7px;border-radius:3px;background:#f07c10"></div>
<div class="b" style="left:1627px;top:156px;width:42px;height:41px;padding:0;"><div style="left:0;top:0;width:42px;height:41px;transform:scale(0.85);transform-origin:50% 8%"><svg style="left:6px;top:5px" width="30" height="22"><path d="M4 10 L4 5 M7 9 L7 2 M10 9 L10 1 M13 9 L13 3 M16 12 L18 8" stroke="#aaa" stroke-width="2.2" stroke-linecap="round"/><path d="M3 10 Q4 20 10 20 Q16 20 17 12 L17 9 L4 9Z" fill="#aaa"/><rect x="14" y="3" width="14" height="14" fill="#555" stroke="#888"/><path d="M21 5V15M16 10H26" stroke="#aaa" stroke-width="1"/></svg></div><span style="left:0;right:0;bottom:5px;text-align:center;font-weight:normal;font-size:9px;letter-spacing:0.2px;color:#b0b0b0">Scroll</span></div>
<div class="b" style="left:1627px;top:200px;width:42px;height:41px;padding:0;"><div style="left:0;top:0;width:42px;height:41px;transform:scale(0.85);transform-origin:50% 8%"><svg style="left:5px;top:4px" width="32" height="24"><rect x="15" y="2" width="14" height="14" fill="#555" stroke="#888"/><path d="M22 4V14M19 7L22 4L25 7M19 11L22 14L25 11" stroke="#aaa" stroke-width="1" fill="none"/><circle cx="11" cy="8" r="5.5" fill="#333" stroke="#bbb" stroke-width="1.3"/><path d="M7 12L1 19" stroke="#aaa" stroke-width="2"/></svg></div><span style="left:0;right:0;bottom:5px;text-align:center;font-weight:normal;font-size:9px;letter-spacing:0.2px;color:#b0b0b0">Zoom</span></div>
<div class="b" style="left:1627px;top:244px;width:42px;height:41px;padding:0;"><div style="left:0;top:0;width:42px;height:41px;transform:scale(0.85);transform-origin:50% 8%"><svg style="left:5px;top:4px" width="32" height="24"><rect x="15" y="2" width="14" height="14" fill="#555" stroke="#888"/><text x="22" y="14" font-family="Liberation Sans" font-size="8" fill="#aaa" text-anchor="middle">x1</text><circle cx="11" cy="8" r="5.5" fill="#333" stroke="#bbb" stroke-width="1.3"/><path d="M7 12L1 19" stroke="#aaa" stroke-width="2"/></svg></div><span style="left:0;right:0;bottom:5px;text-align:center;font-weight:normal;font-size:9px;letter-spacing:0.2px;color:#b0b0b0">Actual</span></div>
<div class="b" style="left:1627px;top:288px;width:42px;height:41px;padding:0;"><div style="left:0;top:0;width:42px;height:41px;transform:scale(0.85);transform-origin:50% 8%"><svg style="left:5px;top:4px" width="32" height="24"><rect x="15" y="2" width="14" height="14" fill="#555" stroke="#888"/><rect x="15" y="9" width="14" height="7" fill="#888"/><circle cx="11" cy="8" r="5.5" fill="#333" stroke="#bbb" stroke-width="1.3"/><path d="M7 12L1 19" stroke="#aaa" stroke-width="2"/></svg></div><span style="left:0;right:0;bottom:5px;text-align:center;font-weight:normal;font-size:9px;letter-spacing:0.2px;color:#b0b0b0">AAHalf</span></div>
<div class="o" style="left:1627px;top:332px;width:42px;height:41px;padding:0;"><div style="left:0;top:0;width:42px;height:41px;transform:scale(1);transform-origin:50% 8%"><svg style="left:0;top:0" width="42" height="41"><text x="21" y="8" font-family="Liberation Sans" font-weight="bold" font-size="8.5" fill="#fff" text-anchor="middle">Dynamic</text><path d="M9 12H33M7 15.5H35M5 19H37M4 22.5H38M15 10L10 23M21 10V23M27 10L32 23" stroke="#222" stroke-width="1.2"/></svg></div><span style="left:0;right:0;bottom:5px;text-align:center;font-weight:normal;font-size:9px;letter-spacing:0.2px;color:#111">Persp</span></div>
<div class="bd" style="left:1627px;top:376px;width:42px;height:41px;padding:0;background:#282828;border-color:#1e1e1e"><div style="left:0;top:0;width:42px;height:41px;transform:scale(1);transform-origin:50% 8%"><svg style="left:0;top:0" width="42" height="41"><text x="17" y="8" font-family="Liberation Sans" font-size="7" fill="#555">x</text><text x="24" y="8" font-family="Liberation Sans" font-weight="bold" font-size="7.5" fill="#bbb">Y</text><text x="32" y="8" font-family="Liberation Sans" font-size="7" fill="#555">z</text><path d="M21 12V19M17.5 15.5L21 19.5L24.5 15.5" stroke="#c4c4c4" stroke-width="2" fill="none"/><rect x="7" y="21" width="29" height="3" fill="#c4c4c4"/></svg></div><span style="left:0;right:0;bottom:5px;text-align:center;font-weight:normal;font-size:9px;letter-spacing:0.2px;color:#b0b0b0">Floor</span></div>
<div class="o" style="left:1627px;top:420px;width:42px;height:41px;padding:0;"><div style="left:0;top:0;width:42px;height:41px;transform:scale(1);transform-origin:50% 8%"><svg style="left:0;top:0" width="42" height="41"><defs><radialGradient id="lcg" cx="0.45" cy="0.4" r="0.6"><stop offset="0" stop-color="#000"/><stop offset="0.6" stop-color="#1a1008"/><stop offset="1" stop-color="#f07c10" stop-opacity="0"/></radialGradient></defs><circle cx="28" cy="17" r="10" fill="url(#lcg)"/><path d="M16 9 Q9 10 9 16 Q9 22 14 24" stroke="#111" stroke-width="1.4" fill="none"/><path d="M15 12 Q11 13 11.5 17 Q12 20 15 21" stroke="#111" stroke-width="1.3" fill="none"/><rect x="16" y="15" width="3" height="3" fill="none" stroke="#111" stroke-width="0.9"/><path d="M12 22 L15 26 L17 22Z" fill="#111"/></svg></div><span style="left:0;right:0;bottom:5px;text-align:center;font-weight:normal;font-size:9px;letter-spacing:0.2px;color:#111">Local</span></div>
<div class="bd" style="left:1627px;top:464px;width:42px;height:41px;padding:0;background:#282828;border-color:#1e1e1e"><div style="left:0;top:0;width:42px;height:41px;transform:scale(1);transform-origin:50% 8%"><svg style="left:0;top:0" width="42" height="41"><path d="M9 19H34" stroke="#bbb" stroke-width="1.3"/><path d="M21 12V24" stroke="#bbb" stroke-width="1.2" stroke-dasharray="2 1.5"/><path d="M8 15L13 11V14H18V16H13V19Z" fill="#c4c4c4"/><path d="M34 15L29 11V14H24V16H29V19Z" fill="#c4c4c4"/><rect x="19.5" y="17.5" width="3" height="3" fill="none" stroke="#bbb" stroke-width="0.8"/></svg></div><span style="left:0;right:0;bottom:5px;text-align:center;font-weight:normal;font-size:9px;letter-spacing:0.2px;color:#b0b0b0">L.Sym</span></div>
<div class="o" style="left:1627px;top:509px;width:42px;height:19px;padding:0"><svg style="left:2px;top:1px" width="38" height="17"><path d="M10 4 A5.5 5.5 0 1 0 12 10" stroke="#111" stroke-width="1.4" fill="none"/><path d="M9 1.5L12 4L8.5 6" stroke="#111" stroke-width="1.2" fill="none"/><path d="M6 12L9 15L11 11Z" fill="#111"/><text x="24" y="14" font-family="Liberation Sans" font-weight="bold" font-size="10" fill="#111" text-anchor="middle">XYZ</text></svg></div>
<svg style="left:1640px;top:532px" width="18" height="16"><path d="M8 3 A5 5 0 1 0 10 9" stroke="#aaa" stroke-width="1.3" fill="none"/><path d="M7 1L10 3L7 5.5" stroke="#aaa" stroke-width="1.1" fill="none"/><text x="9" y="14.5" font-family="Liberation Sans" font-weight="bold" font-size="9" fill="#aaa">Y</text></svg>
<svg style="left:1645px;top:554px" width="18" height="16"><path d="M8 3 A5 5 0 1 0 10 9" stroke="#aaa" stroke-width="1.3" fill="none"/><path d="M7 1L10 3L7 5.5" stroke="#aaa" stroke-width="1.1" fill="none"/><text x="9" y="14.5" font-family="Liberation Sans" font-weight="bold" font-size="9" fill="#aaa">Z</text></svg>
<div class="b" style="left:1627px;top:575px;width:42px;height:41px;padding:0;"><div style="left:0;top:0;width:42px;height:41px;transform:scale(0.85);transform-origin:50% 8%"><svg style="left:0;top:0" width="42" height="41"><path d="M9 6L14 11M9 6V10M9 6H13M33 6L28 11M33 6V10M33 6H29M9 26L14 21M9 26V22M9 26H13M33 26L28 21M33 26V22M33 26H29" stroke="#bbb" stroke-width="1.2" fill="none"/><circle cx="21" cy="16" r="3.5" fill="#999"/></svg></div><span style="left:0;right:0;bottom:5px;text-align:center;font-weight:normal;font-size:9px;letter-spacing:0.2px;color:#b0b0b0">Frame</span></div>
<div class="b" style="left:1627px;top:619px;width:42px;height:41px;padding:0;"><div style="left:0;top:0;width:42px;height:41px;transform:scale(0.85);transform-origin:50% 8%"><svg style="left:0;top:0" width="42" height="41"><circle cx="27" cy="13" r="8" fill="#777"/><rect x="24" y="10" width="6" height="6" fill="#555" stroke="#aaa"/><path d="M9 16 L9 11 M12 15 L12 8 M15 15 L15 7 M18 15 L18 9" stroke="#bbb" stroke-width="2.2" stroke-linecap="round"/><path d="M8 16 Q9 26 15 26 Q21 26 22 18 L22 14 L9 14Z" fill="#bbb"/></svg></div><span style="left:0;right:0;bottom:5px;text-align:center;font-weight:normal;font-size:9px;letter-spacing:0.2px;color:#b0b0b0">Move</span></div>
<div class="b" style="left:1627px;top:663px;width:42px;height:41px;padding:0;"><div style="left:0;top:0;width:42px;height:41px;transform:scale(0.85);transform-origin:50% 8%"><svg style="left:0;top:0" width="42" height="41"><circle cx="27" cy="13" r="8" fill="#777"/><rect x="24" y="10" width="6" height="6" fill="#555" stroke="#aaa"/><circle cx="16" cy="13" r="5.5" fill="#444" stroke="#bbb" stroke-width="1.3"/><path d="M12 17L6 24" stroke="#bbb" stroke-width="2"/></svg></div><span style="left:0;right:0;bottom:5px;text-align:center;font-weight:normal;font-size:9px;letter-spacing:0.2px;color:#b0b0b0">Scale</span></div>
<div class="b" style="left:1627px;top:707px;width:42px;height:41px;padding:0;"><div style="left:0;top:0;width:42px;height:41px;transform:scale(0.85);transform-origin:50% 8%"><svg style="left:0;top:0" width="42" height="41"><path d="M15 12 A6 6 0 0 1 27 12" stroke="#bbb" stroke-width="2" fill="none"/><circle cx="21" cy="18" r="6" fill="#888"/><rect x="19" y="16" width="4" height="4" fill="#444" stroke="#ccc" stroke-width="0.8"/><path d="M26 14 Q33 18 27 25" stroke="#bbb" stroke-width="1.5" fill="none"/></svg></div><span style="left:0;right:0;bottom:5px;text-align:center;font-weight:normal;font-size:9px;letter-spacing:0.2px;color:#b0b0b0">Rotate</span></div>
<div class="bd" style="left:1627px;top:751px;width:42px;height:41px;padding:0;background:#282828;border-color:#1e1e1e"><div style="left:0;top:0;width:42px;height:41px;transform:scale(1);transform-origin:50% 8%"><svg style="left:0;top:0" width="42" height="41"><text x="21" y="8" font-family="Liberation Sans" font-weight="bold" font-size="8.5" fill="#999" text-anchor="middle">Line Fill</text><g stroke="#aaa" stroke-width="0.9" fill="none"><rect x="10" y="9" width="24" height="16"/><path d="M14 9V25M18 9V25M22 9V25M26 9V25M30 9V25M10 13H34M10 17H34M10 21H34"/></g></svg></div><span style="left:0;right:0;bottom:5px;text-align:center;font-weight:normal;font-size:9px;letter-spacing:0.2px;color:#b0b0b0">PolyF</span></div>
<div class="bd" style="left:1627px;top:795px;width:42px;height:41px;padding:0;background:#282828;border-color:#1e1e1e"><div style="left:0;top:0;width:42px;height:41px;transform:scale(0.85);transform-origin:50% 8%"><svg style="left:0;top:0" width="42" height="41"><rect x="18" y="5" width="12" height="12" fill="none" stroke="#999"/><circle cx="18" cy="19" r="6" fill="#777"/></svg></div><span style="left:0;right:0;bottom:5px;text-align:center;font-weight:normal;font-size:9px;letter-spacing:0.2px;color:#b0b0b0">Transp</span></div>
<div class="bd" style="left:1627px;top:839px;width:42px;height:41px;padding:0;background:#6e4518;border-color:#1e1e1e"><div style="left:0;top:0;width:42px;height:41px;transform:scale(0.85);transform-origin:50% 8%"><svg style="left:0;top:0" width="42" height="41"><circle cx="21" cy="16" r="7" fill="#6b4418" stroke="#5a3814"/><path d="M13 25L29 7" stroke="#5a3814" stroke-width="1.5"/></svg></div><span style="left:0;right:0;bottom:5px;text-align:center;font-weight:normal;font-size:9px;letter-spacing:0.2px;color:#50341a">Ghost</span></div>
<div class="bd" style="left:1627px;top:883px;width:42px;height:41px;padding:0;background:#282828;border-color:#1e1e1e"><div style="left:0;top:0;width:42px;height:41px;transform:scale(1);transform-origin:50% 8%"><svg style="left:0;top:0" width="42" height="41"><text x="21" y="8" font-family="Liberation Sans" font-weight="bold" font-size="8.5" fill="#777" text-anchor="middle">Dynamic</text><circle cx="16" cy="18" r="5.5" fill="#666"/><circle cx="26" cy="18" r="5.5" fill="#666"/><circle cx="21" cy="14" r="5.5" fill="#bbb"/></svg></div><span style="left:0;right:0;bottom:5px;text-align:center;font-weight:normal;font-size:9px;letter-spacing:0.2px;color:#b0b0b0">Solo</span></div>
<div class="b" style="left:1627px;top:927px;width:42px;height:41px;padding:0;"><div style="left:0;top:0;width:42px;height:41px;transform:scale(0.85);transform-origin:50% 8%"><svg style="left:0;top:0" width="42" height="41"><g stroke="#bbb" stroke-width="1.1" fill="none"><path d="M11 5L16 10M11 5V9M11 5H15M31 5L26 10M31 5V9M31 5H27M11 27L16 22M11 27V23M11 27H15M31 27L26 22M31 27V23M31 27H27M6 16H15M27 16H36M8 14L6 16L8 18M34 14L36 16L34 18"/></g><circle cx="21" cy="16" r="1.5" fill="#bbb"/></svg></div><span style="left:0;right:0;bottom:5px;text-align:center;font-weight:normal;font-size:9px;letter-spacing:0.2px;color:#b0b0b0">Xpose</span></div>
<div style="left:1674px;top:3px;width:11px;height:1056px;background:linear-gradient(90deg,#1f1f1f,#222 4px,#262626 10px)"></div>
<div style="left:1676px;top:466px;width:6px;height:50px;background:repeating-conic-gradient(#303030 0 25%,#1e1e1e 0 50%) 0 0/2px 2px"></div>
<svg style="left:1675px;top:518px" width="9" height="24"><path d="M1 0 L8 6 L1 12Z" fill="#3a3a3a"/><path d="M8 12 L1 18 L8 24Z" fill="#3a3a3a"/></svg>
<div style="left:1676px;top:544px;width:6px;height:50px;background:repeating-conic-gradient(#303030 0 25%,#1e1e1e 0 50%) 0 0/2px 2px"></div>
<div style="left:1709px;top:-10px;width:186px;height:310px;background:#333;border:1px solid #111;border-radius:0 0 8px 8px"></div>
<div class="b" style="left:1715px;top:-13px;width:86px;height:22px;line-height:20px;padding-left:3px;">Copy&nbsp; Tool</div>
<div class="bd" style="left:1803px;top:-13px;width:86px;height:22px;line-height:20px;padding-left:3px;background:#3a3a3a;border-color:#2e2e2e;color:#666">Paste&nbsp; Tool</div>
<div class="b" style="left:1715px;top:11px;width:86px;height:20px;line-height:18px;padding-left:3px;">Import</div>
<div class="b" style="left:1803px;top:11px;width:86px;height:20px;line-height:18px;padding-left:3px;">Export</div>
<div class="b" style="left:1715px;top:33px;width:42px;height:19px;line-height:17px;padding-left:3px;">Clone</div>
<div class="b" style="left:1759px;top:33px;width:130px;height:19px;line-height:17px;padding-left:3px;">Make&nbsp; PolyMesh3D</div>
<div class="b" style="left:1715px;top:55px;width:42px;height:20px;line-height:18px;padding-left:3px;">GoZ</div>
<div class="b" style="left:1759px;top:55px;width:42px;height:20px;line-height:18px;padding-left:3px;">All</div>
<div class="b" style="left:1803px;top:55px;width:64px;height:20px;line-height:18px;padding-left:3px;">Visible</div>
<div class="b" style="left:1869px;top:55px;width:20px;height:20px;line-height:18px;padding-left:3px;">R</div>
<div class="b" style="left:1715px;top:77px;width:174px;height:19px;line-height:17px;padding-left:3px;"><span style="left:3px;top:0">Lightbox</span><svg style="left:56px;top:5px" width="5" height="9"><path d="M0 0L5 4.5L0 9Z" fill="#c2c2c2"/></svg><span style="left:64px;top:0">Tools</span></div>
<div class="t" style="left:1718px;top:99px">base&nbsp; pintada. 48</div>
<div style="left:1718px;top:115px;width:148px;height:1px;background:linear-gradient(90deg,#3a3a3a,#777 50%,#888)"></div>
<div style="left:1849px;top:112px;width:15px;height:7px;border-radius:3px;background:#f07c10"></div>
<div class="b" style="left:1869px;top:99px;width:20px;height:19px;line-height:17px;padding-left:3px;">R</div>
<div class="tile" style="left:1715px;top:121px;width:86px;height:86px;background:#444"><div class="lab" style="height:10px;line-height:10px;background:#2b2b2b;color:#777">base&nbsp; pintada</div><span style="left:2px;top:1px;color:#ddd;font-size:9.5px;letter-spacing:0.5px">10</span></div>
<div style="left:1803px;top:122px;width:86px;height:41px;background:#2b2b2b;border-radius:3px"><span style="left:0;right:0;bottom:1px;text-align:center;color:#bbb;font-size:9px;letter-spacing:0.2px">Cylinder3D</span></div>
<div style="left:1803px;top:165px;width:86px;height:41px;background:#2b2b2b;border-radius:3px"><span style="left:0;right:0;bottom:1px;text-align:center;color:#bbb;font-size:9px;letter-spacing:0.2px">PolyMesh3D</span></div>
<div style="left:1715px;top:209px;width:86px;height:41px;background:#2b2b2b;border-radius:3px"><span style="left:0;right:0;bottom:1px;text-align:center;color:#bbb;font-size:9px;letter-spacing:0.2px">SimpleBrush</span></div>
<div class="tile" style="left:1803px;top:209px;width:86px;height:42px;background:#444"><div class="lab" style="height:10px;line-height:10px;background:#2b2b2b;color:#999">base&nbsp; pintada</div><span style="left:2px;top:1px;color:#ddd;font-size:9.5px;letter-spacing:0.5px">10</span></div>
<div style="left:1715px;top:253px;width:86px;height:41px;background:#2b2b2b;border-radius:3px"><span style="left:0;right:0;bottom:1px;text-align:center;color:#bbb;font-size:9px;letter-spacing:0.2px">Skin_ZSphere1 _8</span><span style="left:3px;top:2px;color:#ddd;font-size:9.5px">7</span></div>
<svg style="left:1741px;top:129px" width="50" height="70" viewBox="0 0 50 70"><defs><linearGradient id="pg1" x1="0" y1="0" x2="1" y2="1"><stop offset="0" stop-color="#ffffff"/><stop offset="0.55" stop-color="#e2e2e2"/><stop offset="1" stop-color="#8a8a8a"/></linearGradient></defs><path d="M8 10 Q10 1 18 2 Q26 4 25 12 Q24 18 20 20 Q22 28 24 36 Q30 42 44 46 Q46 50 42 56 Q30 66 20 68 Q10 68 8 62 Q6 54 12 48 Q16 44 16 36 Q16 28 12 22 Q6 18 8 10Z" fill="url(#pg1)"/><path d="M10 60 Q24 58 42 52" stroke="#bbb" stroke-width="1.5" fill="none"/></svg>
<svg style="left:1834px;top:212px" width="21" height="30" viewBox="0 0 50 70"><defs><linearGradient id="pg2" x1="0" y1="0" x2="1" y2="1"><stop offset="0" stop-color="#ffffff"/><stop offset="0.55" stop-color="#e2e2e2"/><stop offset="1" stop-color="#8a8a8a"/></linearGradient></defs><path d="M8 10 Q10 1 18 2 Q26 4 25 12 Q24 18 20 20 Q22 28 24 36 Q30 42 44 46 Q46 50 42 56 Q30 66 20 68 Q10 68 8 62 Q6 54 12 48 Q16 44 16 36 Q16 28 12 22 Q6 18 8 10Z" fill="url(#pg2)"/><path d="M10 60 Q24 58 42 52" stroke="#bbb" stroke-width="1.5" fill="none"/></svg>
<svg style="left:1829px;top:123px" width="36" height="34"><defs><linearGradient id="cyl" x1="0" x2="1"><stop offset="0" stop-color="#aaa"/><stop offset="0.5" stop-color="#ccc"/><stop offset="1" stop-color="#888"/></linearGradient></defs><path d="M4 6 L10 30 Q20 36 30 28 L24 4Z" fill="url(#cyl)"/><ellipse cx="14" cy="5" rx="10" ry="4.5" transform="rotate(-12 14 5)" fill="#d0d0d0"/></svg>
<svg style="left:1831px;top:167px" width="30" height="28"><path d="M15 0 L18 10 L28 8 L20 15 L26 24 L16 19 L13 28 L11 18 L2 20 L9 13 L3 5 L13 9Z" fill="#cfcfcf" stroke="#999" stroke-width="0.5"/></svg>
<svg style="left:1745px;top:210px" width="26" height="26"><defs><linearGradient id="sb" x1="0" y1="0" x2="1" y2="1"><stop offset="0" stop-color="#ffcf40"/><stop offset="0.5" stop-color="#f08a00"/><stop offset="1" stop-color="#a04800"/></linearGradient></defs><path d="M20 5 Q14 0 8 4 Q3 9 10 13 Q17 16 14 21 Q10 25 4 21" stroke="url(#sb)" stroke-width="6.5" fill="none" stroke-linecap="round"/></svg>
<svg style="left:1748px;top:256px" width="26" height="22"><path d="M12 1 Q2 6 2 14 Q4 20 12 20 Q18 20 25 19 Q16 16 12 12 Q8 6 12 1Z" fill="#e8e8e8"/><g fill="none" stroke="#888" stroke-width="0.7"><path d="M10 3 Q5 10 8 16 Q14 19 22 19"/><path d="M8 6 Q4 12 6 17"/><path d="M11 8 Q10 14 18 17"/></g></svg>
<div style="left:1709px;top:309px;width:186px;height:718px;background:#2e2e2e;border:1px solid #111;border-radius:8px;box-shadow:0 4px 6px rgba(0,0,0,0.4)"></div>
<div style="left:1710px;top:310px;width:184px;height:16px;background:linear-gradient(#2c2c2c,#262626);border-radius:7px 7px 0 0;border-bottom:1px solid #1a1a1a"></div>
<div class="t" style="left:1723px;top:312px;color:#a4a4a4">SubTool</div>
<div style="left:1710px;top:326px;width:184px;height:364px;background:linear-gradient(#3b3b3b,#333 40%,#2e2e2e)"></div>
<div style="left:1718px;top:330px;width:5px;height:359px;border:1px solid #2a2a2a;border-radius:2px;background:#333"></div>
<div style="left:1718px;top:331px;width:5px;height:17px;border-radius:2px;background:#f07c10"></div>
<div style="left:1731px;top:330px;width:157px;height:42px;background:#3a3a3a;border:1px solid #0d0d0d;border-radius:3px"><div class="lab" style="height:10px;line-height:10px;background:#222;color:#aaa">base&nbsp; pintada</div></div>
<svg style="left:1781px;top:332px;opacity:1" width="110" height="16"><circle cx="8" cy="8" r="5.5" fill="#aaa"/><circle cx="14" cy="8" r="5.5" fill="#fff"/><circle cx="28" cy="8" r="5.5" fill="#555"/><circle cx="32" cy="8" r="5" fill="#3a3a3a" opacity="0.7"/><circle cx="48" cy="8" r="5.5" fill="none" stroke="#555"/><circle cx="54" cy="8" r="5.5" fill="none" stroke="#555"/><path d="M68 13 L80 5" stroke="#505050" stroke-width="2"/><path d="M86 7 Q96 -1 106 7" stroke="#ccc" stroke-width="1.5" fill="none"/><circle cx="96" cy="8" r="4.5" fill="#555" stroke="#ccc" stroke-width="1.3"/></svg>
<div style="left:1731px;top:374px;width:157px;height:42px;background:rgba(255,255,255,0.015);border:1px solid rgba(0,0,0,0.12);border-radius:3px"><span style="left:0;right:0;bottom:0;text-align:center;color:#aaa;font-size:9px;letter-spacing:0.3px;white-space:nowrap">torso21 _15</span></div>
<svg style="left:1781px;top:376px;opacity:0.75" width="110" height="16"><circle cx="8" cy="8" r="5.5" fill="#aaa"/><circle cx="14" cy="8" r="5.5" fill="#bbb"/><circle cx="28" cy="8" r="5.5" fill="#555"/><circle cx="32" cy="8" r="5" fill="#3a3a3a" opacity="0.7"/><circle cx="48" cy="8" r="5.5" fill="none" stroke="#555"/><circle cx="54" cy="8" r="5.5" fill="none" stroke="#555"/><path d="M68 13 L80 5" stroke="#505050" stroke-width="2"/><path d="M86 7 Q96 -1 106 7" stroke="#ccc" stroke-width="1.5" fill="none"/><circle cx="96" cy="8" r="4.5" fill="#555" stroke="#ccc" stroke-width="1.3"/></svg>
<div style="left:1731px;top:418px;width:157px;height:42px;background:rgba(255,255,255,0.015);border:1px solid rgba(0,0,0,0.12);border-radius:3px"><span style="left:0;right:0;bottom:0;text-align:center;color:#aaa;font-size:9px;letter-spacing:0.3px;white-space:nowrap">sutura&nbsp; del&nbsp; abdomen</span></div>
<svg style="left:1781px;top:420px;opacity:0.75" width="110" height="16"><circle cx="8" cy="8" r="5.5" fill="#aaa"/><circle cx="14" cy="8" r="5.5" fill="#bbb"/><circle cx="28" cy="8" r="5.5" fill="#555"/><circle cx="32" cy="8" r="5" fill="#3a3a3a" opacity="0.7"/><circle cx="48" cy="8" r="5.5" fill="none" stroke="#555"/><circle cx="54" cy="8" r="5.5" fill="none" stroke="#555"/><path d="M68 13 L80 5" stroke="#505050" stroke-width="2"/><path d="M86 7 Q96 -1 106 7" stroke="#ccc" stroke-width="1.5" fill="none"/><circle cx="96" cy="8" r="4.5" fill="#555" stroke="#ccc" stroke-width="1.3"/></svg>
<div style="left:1731px;top:462px;width:157px;height:42px;background:rgba(255,255,255,0.015);border:1px solid rgba(0,0,0,0.12);border-radius:3px"><span style="left:0;right:0;bottom:0;text-align:center;color:#aaa;font-size:9px;letter-spacing:0.3px;white-space:nowrap">rasta&nbsp; 8</span></div>
<svg style="left:1781px;top:464px;opacity:0.75" width="110" height="16"><circle cx="8" cy="8" r="5.5" fill="#aaa"/><circle cx="14" cy="8" r="5.5" fill="#bbb"/><circle cx="28" cy="8" r="5.5" fill="#555"/><circle cx="32" cy="8" r="5" fill="#3a3a3a" opacity="0.7"/><circle cx="48" cy="8" r="5.5" fill="none" stroke="#555"/><circle cx="54" cy="8" r="5.5" fill="none" stroke="#555"/><path d="M68 13 L80 5" stroke="#505050" stroke-width="2"/><path d="M86 7 Q96 -1 106 7" stroke="#ccc" stroke-width="1.5" fill="none"/><circle cx="96" cy="8" r="4.5" fill="#555" stroke="#ccc" stroke-width="1.3"/></svg>
<div style="left:1731px;top:506px;width:157px;height:42px;background:rgba(255,255,255,0.015);border:1px solid rgba(0,0,0,0.12);border-radius:3px"><span style="left:0;right:0;bottom:0;text-align:center;color:#aaa;font-size:9px;letter-spacing:0.3px;white-space:nowrap">Skin_ZSphere1 _16</span></div>
<svg style="left:1781px;top:508px;opacity:0.75" width="110" height="16"><circle cx="8" cy="8" r="5.5" fill="#aaa"/><circle cx="14" cy="8" r="5.5" fill="#bbb"/><circle cx="28" cy="8" r="5.5" fill="#555"/><circle cx="32" cy="8" r="5" fill="#3a3a3a" opacity="0.7"/><circle cx="48" cy="8" r="5.5" fill="none" stroke="#555"/><circle cx="54" cy="8" r="5.5" fill="none" stroke="#555"/><path d="M68 13 L80 5" stroke="#505050" stroke-width="2"/><path d="M86 7 Q96 -1 106 7" stroke="#ccc" stroke-width="1.5" fill="none"/><circle cx="96" cy="8" r="4.5" fill="#555" stroke="#ccc" stroke-width="1.3"/></svg>
<div style="left:1731px;top:550px;width:157px;height:42px;background:rgba(255,255,255,0.015);border:1px solid rgba(0,0,0,0.12);border-radius:3px"><span style="left:0;right:0;bottom:0;text-align:center;color:#aaa;font-size:9px;letter-spacing:0.3px;white-space:nowrap">Skin_ZSphere2_4</span></div>
<svg style="left:1781px;top:552px;opacity:0.75" width="110" height="16"><circle cx="8" cy="8" r="5.5" fill="#aaa"/><circle cx="14" cy="8" r="5.5" fill="#bbb"/><circle cx="28" cy="8" r="5.5" fill="#555"/><circle cx="32" cy="8" r="5" fill="#3a3a3a" opacity="0.7"/><circle cx="48" cy="8" r="5.5" fill="none" stroke="#555"/><circle cx="54" cy="8" r="5.5" fill="none" stroke="#555"/><path d="M68 13 L80 5" stroke="#505050" stroke-width="2"/><path d="M86 7 Q96 -1 106 7" stroke="#ccc" stroke-width="1.5" fill="none"/><circle cx="96" cy="8" r="4.5" fill="#555" stroke="#ccc" stroke-width="1.3"/></svg>
<div style="left:1731px;top:594px;width:157px;height:42px;background:rgba(255,255,255,0.015);border:1px solid rgba(0,0,0,0.12);border-radius:3px"><span style="left:0;right:0;bottom:0;text-align:center;color:#aaa;font-size:9px;letter-spacing:0.3px;white-space:nowrap">Skin_ZSphere3 _3</span></div>
<svg style="left:1781px;top:596px;opacity:0.75" width="110" height="16"><circle cx="8" cy="8" r="5.5" fill="#aaa"/><circle cx="14" cy="8" r="5.5" fill="#bbb"/><circle cx="28" cy="8" r="5.5" fill="#555"/><circle cx="32" cy="8" r="5" fill="#3a3a3a" opacity="0.7"/><circle cx="48" cy="8" r="5.5" fill="none" stroke="#555"/><circle cx="54" cy="8" r="5.5" fill="none" stroke="#555"/><path d="M68 13 L80 5" stroke="#505050" stroke-width="2"/><path d="M86 7 Q96 -1 106 7" stroke="#ccc" stroke-width="1.5" fill="none"/><circle cx="96" cy="8" r="4.5" fill="#555" stroke="#ccc" stroke-width="1.3"/></svg>
<div style="left:1731px;top:638px;width:157px;height:42px;background:rgba(255,255,255,0.015);border:1px solid rgba(0,0,0,0.12);border-radius:3px"><span style="left:0;right:0;bottom:0;text-align:center;color:#aaa;font-size:9px;letter-spacing:0.3px;white-space:nowrap">Skin_ZSphere3_17</span></div>
<svg style="left:1781px;top:640px;opacity:0.75" width="110" height="16"><circle cx="8" cy="8" r="5.5" fill="#aaa"/><circle cx="14" cy="8" r="5.5" fill="#bbb"/><circle cx="28" cy="8" r="5.5" fill="#555"/><circle cx="32" cy="8" r="5" fill="#3a3a3a" opacity="0.7"/><circle cx="48" cy="8" r="5.5" fill="none" stroke="#555"/><circle cx="54" cy="8" r="5.5" fill="none" stroke="#555"/><path d="M68 13 L80 5" stroke="#505050" stroke-width="2"/><path d="M86 7 Q96 -1 106 7" stroke="#ccc" stroke-width="1.5" fill="none"/><circle cx="96" cy="8" r="4.5" fill="#555" stroke="#ccc" stroke-width="1.3"/></svg>
<div style="left:1738px;top:333px"><svg width="28" height="32" viewBox="0 0 28 32"><path d="M6 3 Q9 -1 13 2 Q15 5 12 9 Q14 14 14 18 Q20 22 24 25 Q22 29 12 30 Q5 31 4 28 Q4 24 9 21 Q9 15 7 9 Q4 6 6 3Z" fill="#ddd"/></svg></div>
<div style="left:1734px;top:379px"><svg width="30" height="26" viewBox="0 0 30 26"><path d="M6 4 Q14 -2 22 4 Q26 10 24 16 Q28 20 22 24 Q12 26 4 24 Q8 18 4 12 Q3 8 6 4Z" fill="#ccc"/><path d="M10 12 Q14 16 20 12" stroke="#777" fill="none"/></svg></div>
<div style="left:1731px;top:423px"><svg width="36" height="22" viewBox="0 0 36 22"><path d="M2 6 Q10 2 18 4 Q26 2 34 6 L32 12 Q26 10 24 14 Q22 20 16 20 Q10 20 10 14 Q8 10 4 12Z" fill="#ddd"/></svg></div>
<div style="left:1734px;top:466px"><svg width="26" height="32" viewBox="0 0 26 32"><g stroke="#ddd" stroke-width="2" fill="none"><path d="M2 4 Q14 2 18 16 Q20 24 16 28"/><path d="M4 8 Q14 8 16 20"/><path d="M3 12 Q10 14 12 26"/><path d="M6 2 Q20 6 22 20"/></g></svg></div>
<div style="left:1738px;top:506px"><svg width="20" height="30" viewBox="0 0 20 30"><g stroke="#ddd" stroke-width="1.6" fill="none"><path d="M6 2 Q14 10 8 18 Q4 24 12 28"/><path d="M9 2 Q16 12 10 20 Q8 24 14 28"/></g></svg></div>
<div style="left:1737px;top:550px"><svg width="24" height="30" viewBox="0 0 24 30"><g stroke="#ddd" stroke-width="1.6" fill="none"><path d="M20 2 Q12 12 4 26"/><path d="M22 4 Q14 14 6 28"/><path d="M18 2 Q10 12 3 24"/></g></svg></div>
<div style="left:1737px;top:594px"><svg width="22" height="30" viewBox="0 0 22 30"><g stroke="#ddd" stroke-width="1.4" fill="none"><path d="M4 2 Q14 6 14 16 Q14 22 18 28"/><path d="M2 4 Q10 10 10 18 Q10 24 14 28"/><path d="M6 2 Q16 4 18 14 Q18 22 20 26"/></g></svg></div>
<div style="left:1740px;top:638px"><svg width="18" height="30" viewBox="0 0 18 30"><g stroke="#ddd" stroke-width="1.5" fill="none"><path d="M8 2 Q2 10 8 16 Q12 22 6 28"/><path d="M10 2 Q4 10 10 16 Q14 22 8 28"/><path d="M6 4 Q0 12 6 18 Q10 24 6 28"/></g></svg></div>
<div style="left:1710px;top:690px;width:184px;height:223px;background:#2e2e2e"></div>
<div class="b" style="left:1715px;top:693px;width:86px;height:42px;line-height:40px;padding-left:3px;">List&nbsp; All</div>
<div class="bd" style="left:1803px;top:693px;width:42px;height:20px;line-height:18px;padding-left:3px;background:#2c2c2c;border-color:#262626"><svg style="left:14px;top:3px" width="12" height="13"><path d="M6 0 L11 6 H8 V13 H4 V6 H1Z" fill="#444"/></svg></div>
<div class="b" style="left:1847px;top:693px;width:42px;height:20px;line-height:18px;padding-left:3px;"><svg style="left:14px;top:3px" width="12" height="13"><path d="M6 13 L11 7 H8 V0 H4 V7 H1Z" fill="#bbb"/></svg></div>
<div class="bd" style="left:1803px;top:715px;width:42px;height:20px;line-height:18px;padding-left:3px;background:#2c2c2c;border-color:#262626"><svg style="left:13px;top:3px" width="16" height="13"><path d="M3 13 V7 Q3 4 7 4 H10 V1 L15 5.5 L10 10 V7 H7 Q6 7 6 8 V13Z" fill="#444"/></svg></div>
<div class="b" style="left:1847px;top:715px;width:42px;height:20px;line-height:18px;padding-left:3px;"><svg style="left:13px;top:3px" width="16" height="13"><path d="M2 0 H5 V6 Q5 7 6 7 H9 V4 L14 8.5 L9 13 V10 H6 Q2 10 2 6Z" fill="#bbb"/></svg></div>
<div class="b" style="left:1715px;top:759px;width:86px;height:19px;line-height:17px;padding-left:3px;">Rename</div>
<div class="b" style="left:1803px;top:759px;width:86px;height:19px;line-height:17px;padding-left:3px;">AutoReorder</div>
<div class="b" style="left:1715px;top:781px;width:86px;height:19px;line-height:17px;padding-left:3px;">All&nbsp; Low</div>
<div class="b" style="left:1803px;top:781px;width:86px;height:19px;line-height:17px;padding-left:3px;">All&nbsp; High</div>
<div class="b" style="left:1715px;top:803px;width:86px;height:20px;line-height:18px;padding-left:3px;">Copy</div>
<div class="bd" style="left:1803px;top:803px;width:86px;height:20px;line-height:18px;padding-left:3px;background:#2c2c2c;border-color:#282828;color:#555">Paste</div>
<div class="b" style="left:1715px;top:826px;width:86px;height:41px;line-height:39px;padding-left:3px;">Duplicate</div>
<div class="b" style="left:1803px;top:826px;width:86px;height:19px;line-height:17px;padding-left:3px;">Append</div>
<div class="b" style="left:1803px;top:848px;width:86px;height:19px;line-height:17px;padding-left:3px;">Insert</div>
<div class="b" style="left:1715px;top:870px;width:86px;height:40px;line-height:38px;padding-left:3px;">Delete</div>
<div class="b" style="left:1803px;top:870px;width:86px;height:19px;line-height:17px;padding-left:3px;">Del&nbsp; Other</div>
<div class="b" style="left:1803px;top:892px;width:86px;height:18px;line-height:16px;padding-left:3px;">Del&nbsp; All</div>
<div style="left:1710px;top:913px;width:184px;height:22px;background:#2b2b2b;border-top:1px solid #363636;"></div>
<div class="t" style="left:1719px;top:918px;color:#bcbcbc">Split</div>
<div style="left:1710px;top:935px;width:184px;height:22px;background:#2b2b2b;border-top:1px solid #363636;"></div>
<div class="t" style="left:1719px;top:940px;color:#bcbcbc">Merge</div>
<div style="left:1710px;top:957px;width:184px;height:22px;background:#2b2b2b;border-top:1px solid #363636;"></div>
<div class="t" style="left:1719px;top:962px;color:#bcbcbc">Remesh</div>
<div style="left:1710px;top:979px;width:184px;height:22px;background:#2b2b2b;border-top:1px solid #363636;"></div>
<div class="t" style="left:1719px;top:984px;color:#bcbcbc">Project</div>
<div style="left:1710px;top:1001px;width:184px;height:22px;background:#2b2b2b;border-top:1px solid #363636;border-radius:0 0 7px 7px"></div>
<div class="t" style="left:1719px;top:1006px;color:#bcbcbc">Extract</div>
<div class="t" style="left:1723px;top:1038px;color:#d0d0d0">Geometry</div>
</body></html>
